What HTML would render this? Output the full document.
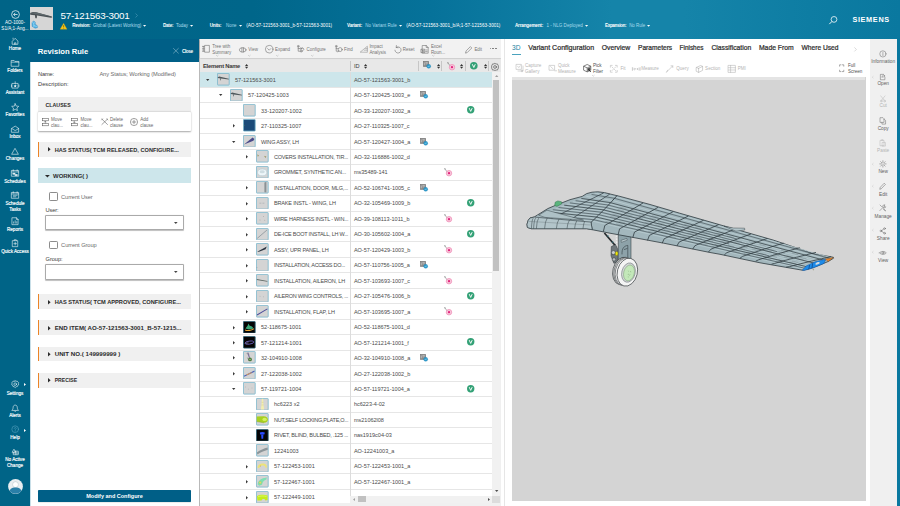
<!DOCTYPE html>
<html><head><meta charset="utf-8"><title>57-121563-3001</title>
<style>
html,body{margin:0;padding:0;}
body{width:900px;height:506px;overflow:hidden;position:relative;background:#006487;font-family:"Liberation Sans",sans-serif;}
.b{position:absolute;display:block;}
.t{position:absolute;white-space:nowrap;}
svg{overflow:visible;}
</style></head><body>
<div class="b" style="left:0;top:0;width:900px;height:506px;background:linear-gradient(90deg,#006487 0%,#00668a 28%,#06729a 48%,#1584a9 68%,#1584a9 76%,#0e7da3 90%,#0a789f 100%);"></div>
<div class="b" style="left:0.00px;top:39.40px;width:30.00px;height:467.00px;background:#006487;"></div>
<svg class="b" style="left:10.50px;top:10.00px;" width="9.00" height="9.00" viewBox="0 0 9 9"><circle cx="4.5" cy="4.5" r="3.9" fill="none" stroke="#fff" stroke-width="0.7"/><path d="M6.6 4.5H2.6M4.3 2.8L2.6 4.5L4.3 6.2" fill="none" stroke="#fff" stroke-width="0.7"/></svg>
<div class="t" style="left:-35.00px;width:100px;text-align:center;top:20px;font-size:4.60px;line-height:5px;color:#fff;">AO-1000-</div>
<div class="t" style="left:-35.00px;width:100px;text-align:center;top:26px;font-size:4.60px;line-height:5px;color:#fff;">S1/A;1-Ang...</div>
<div class="b" style="left:30.00px;top:7.30px;width:22.50px;height:22.50px;background:#d6d6d6;"></div>
<svg class="b" style="left:30.00px;top:7.30px;" width="22.50" height="22.50" viewBox="0 0 22.5 22.5"><path d="M0.2 6.0L3 5.0L5.2 4.9L22 9.6L22.2 10.6L20.8 10.8L7.2 8.4L4.8 8.3L0.2 7.7Z" fill="#4a5256"/><path d="M0.2 6.0L5.2 4.9L21 9.4L6 7.2Z" fill="#5f686c"/><path d="M5.0 8.0L6.9 8.3L6.8 10.6L6.2 11.4L5.4 11.0Z" fill="#3c4246"/><path d="M2.0 15.4L3.6 14.2L5.2 15L5.2 17.4L6.8 18.2L7.6 19.4L7.4 20.6L5.2 21.2L2.2 19.4Z" fill="#4fb2e4" stroke="#2a86c4" stroke-width="0.5" stroke-linejoin="round"/><path d="M2 15.4L3.8 16.4V20.2M3.8 16.4L5.2 15.2M3.8 18.4L5.4 19.2L7.4 19.4" fill="none" stroke="#bfe6f8" stroke-width="0.5"/></svg>
<div class="t" style="left:60.40px;top:10px;font-size:9.90px;line-height:11px;color:#fff;letter-spacing:-0.236px;">57-121563-3001</div>
<svg class="b" style="left:135.30px;top:13.30px;" width="3.00" height="5.00" viewBox="0 0 3 5"><path d="M0.5 0.5L2.5 2.5L0.5 4.5" fill="none" stroke="#4d9ab8" stroke-width="0.6"/></svg>
<svg class="b" style="left:60.00px;top:22.70px;" width="7.20" height="6.60" viewBox="0 0 7.2 6.6"><path d="M3.6 0.3L7 6.2H0.2Z" fill="#f5c518" stroke="#e0a800" stroke-width="0.3"/><path d="M3.6 2.2V4.3M3.6 4.9V5.5" stroke="#5a4a00" stroke-width="0.6"/></svg>
<div class="t" style="left:72.20px;top:23px;font-size:4.60px;line-height:5px;color:#fff;font-weight:700;letter-spacing:-0.288px;">Revision:</div>
<div class="t" style="left:92.90px;top:23px;font-size:4.64px;line-height:5px;color:#a9dcec;">Global (Latest Working)</div>
<svg class="b" style="left:143.30px;top:25.20px;" width="3.20" height="1.80" viewBox="0 0 3.2 1.8"><path d="M0 0H3.2L1.6 1.8Z" fill="#fff"/></svg>
<div class="t" style="left:162.90px;top:23px;font-size:4.60px;line-height:5px;color:#fff;font-weight:700;letter-spacing:-0.201px;">Date:</div>
<div class="t" style="left:175.90px;top:23px;font-size:4.53px;line-height:5px;color:#a9dcec;">Today</div>
<svg class="b" style="left:189.90px;top:25.20px;" width="3.20" height="1.80" viewBox="0 0 3.2 1.8"><path d="M0 0H3.2L1.6 1.8Z" fill="#fff"/></svg>
<div class="t" style="left:209.80px;top:23px;font-size:4.60px;line-height:5px;color:#fff;font-weight:700;letter-spacing:-0.266px;">Units:</div>
<div class="t" style="left:226.00px;top:23px;font-size:4.43px;line-height:5px;color:#a9dcec;">None</div>
<svg class="b" style="left:239.00px;top:25.20px;" width="3.20" height="1.80" viewBox="0 0 3.2 1.8"><path d="M0 0H3.2L1.6 1.8Z" fill="#fff"/></svg>
<div class="t" style="left:246.20px;top:23px;font-size:4.63px;line-height:5px;color:#fff;">(AO-57-121563-3001_b-57-121563-3001)</div>
<div class="t" style="left:347.10px;top:23px;font-size:4.60px;line-height:5px;color:#fff;font-weight:700;letter-spacing:-0.253px;">Variant:</div>
<div class="t" style="left:365.20px;top:23px;font-size:4.54px;line-height:5px;color:#a9dcec;">No Variant Rule</div>
<svg class="b" style="left:399.40px;top:25.20px;" width="3.20" height="1.80" viewBox="0 0 3.2 1.8"><path d="M0 0H3.2L1.6 1.8Z" fill="#fff"/></svg>
<div class="t" style="left:406.30px;top:23px;font-size:4.64px;line-height:5px;color:#fff;">(AO-57-121563-3001_b/A;1-57-121563-3001)</div>
<div class="t" style="left:514.90px;top:23px;font-size:4.60px;line-height:5px;color:#fff;font-weight:700;letter-spacing:-0.160px;">Arrangement:</div>
<div class="t" style="left:546.50px;top:23px;font-size:4.54px;line-height:5px;color:#a9dcec;">1 - NLG Deployed</div>
<svg class="b" style="left:584.90px;top:25.20px;" width="3.20" height="1.80" viewBox="0 0 3.2 1.8"><path d="M0 0H3.2L1.6 1.8Z" fill="#fff"/></svg>
<div class="t" style="left:605.00px;top:23px;font-size:4.60px;line-height:5px;color:#fff;font-weight:700;letter-spacing:-0.366px;">Expansion:</div>
<div class="t" style="left:629.20px;top:23px;font-size:4.43px;line-height:5px;color:#a9dcec;">No Rule</div>
<svg class="b" style="left:646.70px;top:25.20px;" width="3.20" height="1.80" viewBox="0 0 3.2 1.8"><path d="M0 0H3.2L1.6 1.8Z" fill="#fff"/></svg>
<svg class="b" style="left:828.00px;top:15.00px;" width="10.00" height="10.00" viewBox="0 0 10 10"><circle cx="6" cy="4.4" r="2.9" fill="none" stroke="#fff" stroke-width="0.75"/><path d="M3.9 6.5L1.3 9.1" stroke="#fff" stroke-width="0.9"/></svg>
<div class="t" style="left:852.40px;top:15px;font-size:7.30px;line-height:9px;color:#fff;font-weight:700;letter-spacing:0.657px;">SIEMENS</div>
<svg class="b" style="left:10.80px;top:37.00px;" width="8.40" height="8.40" viewBox="0 0 9 9"><g fill="none" stroke="#fff" stroke-width="0.6" stroke-linejoin="round" stroke-linecap="round"><path d="M1.6 4.4L4.5 1.4L7.4 4.4V7.8H1.6Z"/><path d="M3.8 7.8V6.2H5.2V7.8"/><path d="M2.2 2.2V1.2"/></g></svg>
<div class="t" style="left:-35.00px;width:100px;text-align:center;top:46px;font-size:4.60px;line-height:5px;color:#fff;-webkit-text-stroke:0.16px #fff;">Home</div>
<svg class="b" style="left:10.80px;top:58.70px;" width="8.40" height="8.40" viewBox="0 0 9 9"><g fill="none" stroke="#fff" stroke-width="0.6" stroke-linejoin="round" stroke-linecap="round"><path d="M0.6 1.6H3.4L4.2 2.6H8.4V7.8H0.6Z"/><path d="M0.6 3.4H8.4"/></g></svg>
<div class="t" style="left:-35.00px;width:100px;text-align:center;top:68px;font-size:4.60px;line-height:5px;color:#fff;-webkit-text-stroke:0.16px #fff;">Folders</div>
<svg class="b" style="left:10.80px;top:80.70px;" width="8.40" height="8.40" viewBox="0 0 9 9"><g fill="none" stroke="#fff" stroke-width="0.6" stroke-linejoin="round" stroke-linecap="round"><path d="M1.4 2.6H7.6V7.6H1.4Z"/><path d="M4.5 2.6V0.8"/><path d="M4.5 3.6L5 4.7L6.2 4.8L5.3 5.6L5.6 6.8L4.5 6.2L3.4 6.8L3.7 5.6L2.8 4.8L4 4.7Z" fill="#fff" stroke="none"/><path d="M0.5 4.2V6M8.5 4.2V6"/></g></svg>
<div class="t" style="left:-35.00px;width:100px;text-align:center;top:90px;font-size:4.60px;line-height:5px;color:#fff;-webkit-text-stroke:0.16px #fff;">Assistant</div>
<svg class="b" style="left:10.80px;top:102.80px;" width="8.40" height="8.40" viewBox="0 0 9 9"><g fill="none" stroke="#fff" stroke-width="0.6" stroke-linejoin="round" stroke-linecap="round"><path d="M4.5 0.8L5.6 3.3L8.3 3.6L6.3 5.4L6.9 8.1L4.5 6.7L2.1 8.1L2.7 5.4L0.7 3.6L3.4 3.3Z"/></g></svg>
<div class="t" style="left:-35.00px;width:100px;text-align:center;top:112px;font-size:4.60px;line-height:5px;color:#fff;-webkit-text-stroke:0.16px #fff;">Favorites</div>
<svg class="b" style="left:10.80px;top:124.80px;" width="8.40" height="8.40" viewBox="0 0 9 9"><g fill="none" stroke="#fff" stroke-width="0.6" stroke-linejoin="round" stroke-linecap="round"><path d="M0.8 3.6L4.5 1.2L8.2 3.6V7.8H0.8Z"/><path d="M0.8 3.8L4.5 6L8.2 3.8"/></g></svg>
<div class="t" style="left:-35.00px;width:100px;text-align:center;top:134px;font-size:4.60px;line-height:5px;color:#fff;-webkit-text-stroke:0.16px #fff;">Inbox</div>
<svg class="b" style="left:10.80px;top:146.60px;" width="8.40" height="8.40" viewBox="0 0 9 9"><g fill="none" stroke="#fff" stroke-width="0.6" stroke-linejoin="round" stroke-linecap="round"><path d="M4.5 1.8L7.9 7.8H1.1Z"/></g></svg>
<div class="t" style="left:-35.00px;width:100px;text-align:center;top:156px;font-size:4.60px;line-height:5px;color:#fff;-webkit-text-stroke:0.16px #fff;">Changes</div>
<svg class="b" style="left:10.80px;top:168.60px;" width="8.40" height="8.40" viewBox="0 0 9 9"><g fill="none" stroke="#fff" stroke-width="0.6" stroke-linejoin="round" stroke-linecap="round"><path d="M0.8 1.6H8.2V7.8H0.8Z"/><path d="M0.8 3.2H8.2"/><path d="M2.4 0.8V2.2M6.6 0.8V2.2"/><path d="M2.2 4.6H4.4V5.6H2.2ZM4.6 6H6.8V7H4.6Z" fill="#fff"/></g></svg>
<div class="t" style="left:-35.00px;width:100px;text-align:center;top:179px;font-size:4.60px;line-height:5px;color:#fff;-webkit-text-stroke:0.16px #fff;">Schedules</div>
<svg class="b" style="left:10.80px;top:190.60px;" width="8.40" height="8.40" viewBox="0 0 9 9"><g fill="none" stroke="#fff" stroke-width="0.6" stroke-linejoin="round" stroke-linecap="round"><path d="M0.8 1.6H8.2V7.8H0.8Z"/><path d="M0.8 3.2H8.2"/><path d="M2.4 0.8V2.2M6.6 0.8V2.2"/><path d="M2.4 4.6H6.6M2.4 6.2H5.2"/></g></svg>
<svg class="b" style="left:10.80px;top:216.80px;" width="8.40" height="8.40" viewBox="0 0 9 9"><g fill="none" stroke="#fff" stroke-width="0.6" stroke-linejoin="round" stroke-linecap="round"><path d="M1.4 0.8H5.8L7.6 2.6V8.2H1.4Z"/><path d="M5.8 0.8V2.6H7.6"/><path d="M2.8 6.6V5.2M4.5 6.6V4M6.2 6.6V5"/></g></svg>
<div class="t" style="left:-35.00px;width:100px;text-align:center;top:227px;font-size:4.60px;line-height:5px;color:#fff;-webkit-text-stroke:0.16px #fff;">Reports</div>
<svg class="b" style="left:10.80px;top:238.60px;" width="8.40" height="8.40" viewBox="0 0 9 9"><g fill="none" stroke="#fff" stroke-width="0.6" stroke-linejoin="round" stroke-linecap="round"><path d="M1.8 1.8H7.2V8.2H1.8Z"/><path d="M3.4 1.8V0.8H5.6V1.8"/><path d="M4.5 3.6V6.4M3.1 5H5.9"/></g></svg>
<div class="t" style="left:-35.00px;width:100px;text-align:center;top:249px;font-size:4.60px;line-height:5px;color:#fff;-webkit-text-stroke:0.16px #fff;">Quick Access</div>
<svg class="b" style="left:10.80px;top:380.40px;" width="8.40" height="8.40" viewBox="0 0 9 9"><g fill="none" stroke="#fff" stroke-width="0.6" stroke-linejoin="round" stroke-linecap="round"><circle cx="4.5" cy="4.5" r="1.4"/><path d="M4.5 0.8L5.4 1.4L6.6 1.2L7.2 2.2L8.2 2.8L7.9 4L8.2 5.2L7.2 5.8L6.8 7L5.6 7.2L4.5 8.2L3.4 7.2L2.2 7L1.8 5.8L0.8 5.2L1.1 4L0.8 2.8L1.8 2.2L2.4 1.2L3.6 1.4Z"/></g></svg>
<div class="t" style="left:-35.00px;width:100px;text-align:center;top:391px;font-size:4.60px;line-height:5px;color:#fff;-webkit-text-stroke:0.16px #fff;">Settings</div>
<svg class="b" style="left:10.80px;top:403.60px;" width="8.40" height="8.40" viewBox="0 0 9 9"><g fill="none" stroke="#fff" stroke-width="0.6" stroke-linejoin="round" stroke-linecap="round"><path d="M1.2 6.6C2.2 5.6 2.2 4.6 2.3 3.4C2.4 2 3.3 1.2 4.5 1.2C5.7 1.2 6.6 2 6.7 3.4C6.8 4.6 6.8 5.6 7.8 6.6Z"/><path d="M3.7 7.6C4 8.2 5 8.2 5.3 7.6"/></g></svg>
<div class="t" style="left:-35.00px;width:100px;text-align:center;top:413px;font-size:4.60px;line-height:5px;color:#fff;-webkit-text-stroke:0.16px #fff;">Alerts</div>
<svg class="b" style="left:10.80px;top:425.40px;" width="8.40" height="8.40" viewBox="0 0 9 9"><g fill="none" stroke="#fff" stroke-width="0.6" stroke-linejoin="round" stroke-linecap="round"><circle cx="4.5" cy="4.5" r="3.6" stroke="#5aa6c2"/><path d="M3.4 3.6C3.4 2.4 5.6 2.4 5.6 3.6C5.6 4.4 4.5 4.4 4.5 5.4M4.5 6.4V6.6" stroke="#5aa6c2"/></g></svg>
<div class="t" style="left:-35.00px;width:100px;text-align:center;top:435px;font-size:4.60px;line-height:5px;color:#fff;-webkit-text-stroke:0.16px #fff;">Help</div>
<svg class="b" style="left:10.80px;top:447.60px;" width="8.40" height="8.40" viewBox="0 0 9 9"><g fill="none" stroke="#fff" stroke-width="0.6" stroke-linejoin="round" stroke-linecap="round"><path d="M3.4 1.6L5.2 4.6H1.6Z"/><path d="M3.6 3.4H7.8V7.2H2.4V4.8"/><path d="M5.2 3.4V7.2M2.4 5.4H7.8"/></g></svg>
<div class="t" style="left:-35.00px;width:100px;text-align:center;top:201px;font-size:4.60px;line-height:5px;color:#fff;-webkit-text-stroke:0.16px #fff;">Schedule</div>
<div class="t" style="left:-35.00px;width:100px;text-align:center;top:207px;font-size:4.60px;line-height:5px;color:#fff;-webkit-text-stroke:0.16px #fff;">Tasks</div>
<div class="t" style="left:-35.00px;width:100px;text-align:center;top:457px;font-size:4.60px;line-height:5px;color:#fff;-webkit-text-stroke:0.16px #fff;">No Active</div>
<div class="t" style="left:-35.00px;width:100px;text-align:center;top:463px;font-size:4.60px;line-height:5px;color:#fff;-webkit-text-stroke:0.16px #fff;">Change</div>
<svg class="b" style="left:24.20px;top:383.30px;" width="2.20" height="3.00" viewBox="0 0 2.2 3"><path d="M0 0L2 1.5L0 3Z" fill="#fff"/></svg>
<svg class="b" style="left:24.20px;top:428.50px;" width="2.20" height="3.00" viewBox="0 0 2.2 3"><path d="M0 0L2 1.5L0 3Z" fill="#fff"/></svg>
<svg class="b" style="left:7.50px;top:479.20px;" width="15.00" height="15.00" viewBox="0 0 15 15"><defs><clipPath id="av"><circle cx="7.5" cy="7.5" r="7.3"/></clipPath></defs><circle cx="7.5" cy="7.5" r="7.4" fill="#e9eef1"/><g clip-path="url(#av)"><circle cx="7.5" cy="5.6" r="2.9" fill="#fff" stroke="#9fb3bd" stroke-width="0.4"/><path d="M1.2 15C1.2 10 3.6 8.6 7.5 8.6C11.4 8.6 13.8 10 13.8 15Z" fill="#2a7fa8"/></g></svg>
<div class="b" style="left:30.00px;top:39.40px;width:168.60px;height:466.60px;background:#fff;"></div>
<div class="b" style="left:30.00px;top:39.40px;width:168.60px;height:22.20px;background:#005f87;"></div>
<div class="b" style="left:30.00px;top:61.60px;width:0.80px;height:445.00px;background:#c9dfe8;"></div>
<div class="t" style="left:37.80px;top:47px;font-size:7.64px;line-height:9px;color:#fff;font-weight:700;">Revision Rule</div>
<svg class="b" style="left:173.30px;top:48.20px;" width="5.80" height="5.60" viewBox="0 0 5.8 5.6"><path d="M0.2 0.2L5.6 5.4M5.6 0.2L0.2 5.4" stroke="#9cc6d6" stroke-width="0.55" fill="none"/></svg>
<div class="t" style="left:182.00px;top:49px;font-size:4.70px;line-height:5px;color:#fff;font-weight:700;letter-spacing:-0.425px;">Close</div>
<div class="t" style="left:38.00px;top:71px;font-size:5.70px;line-height:6px;color:#3a3a3a;letter-spacing:-0.147px;">Name:</div>
<div class="t" style="left:99.40px;top:71px;font-size:5.70px;line-height:6px;color:#6b6b6b;letter-spacing:-0.061px;">Any Status; Working (Modified)</div>
<div class="t" style="left:38.00px;top:81px;font-size:5.70px;line-height:6px;color:#3a3a3a;letter-spacing:0.046px;">Description:</div>
<div class="b" style="left:38.00px;top:97.10px;width:152.90px;height:14.80px;background:#f0f0f0;"></div>
<div class="t" style="left:45.50px;top:102px;font-size:5.29px;line-height:6px;color:#2b2b2b;font-weight:700;">CLAUSES</div>
<div class="b" style="left:38.00px;top:111.90px;width:152.90px;height:19.30px;background:#fff;box-shadow:0 0.6px 1.8px rgba(0,0,0,0.35);border-radius:0.8px;"></div>
<svg class="b" style="left:42.20px;top:117.70px;" width="6.60" height="8.20" viewBox="0 0 6.6 8.2"><g fill="none" stroke="#555" stroke-width="0.55"><rect x="0.3" y="0.4" width="6" height="2.4"/><rect x="0.3" y="5.4" width="6" height="2.4"/><path d="M3.3 5.4V3.2M2.3 4.2L3.3 3.1L4.3 4.2"/></g></svg>
<div class="t" style="left:51.10px;top:117px;font-size:4.50px;line-height:5px;color:#666;">Move</div>
<div class="t" style="left:51.10px;top:123px;font-size:4.50px;line-height:5px;color:#666;">clau...</div>
<svg class="b" style="left:71.10px;top:117.70px;" width="6.60" height="8.20" viewBox="0 0 6.6 8.2"><g fill="none" stroke="#555" stroke-width="0.55"><rect x="0.3" y="0.4" width="6" height="2.4"/><rect x="0.3" y="5.4" width="6" height="2.4"/><path d="M3.3 2.8V5M2.3 4.1L3.3 5.1L4.3 4.1"/></g></svg>
<div class="t" style="left:80.60px;top:117px;font-size:4.50px;line-height:5px;color:#666;">Move</div>
<div class="t" style="left:80.60px;top:123px;font-size:4.50px;line-height:5px;color:#666;">clau...</div>
<svg class="b" style="left:101.00px;top:118.00px;" width="7.40" height="7.60" viewBox="0 0 7.4 7.6"><g fill="none" stroke="#555" stroke-width="0.55"><path d="M0.6 0.8L6.8 6.8M6.8 0.8L0.6 6.8"/><path d="M0.4 2.2L1.8 0.6M5.6 0.6L7 2.2"/></g></svg>
<div class="t" style="left:110.00px;top:117px;font-size:4.50px;line-height:5px;color:#666;">Delete</div>
<div class="t" style="left:110.00px;top:123px;font-size:4.50px;line-height:5px;color:#666;">clause</div>
<svg class="b" style="left:130.20px;top:117.80px;" width="8.00" height="8.00" viewBox="0 0 8 8"><g fill="none" stroke="#555" stroke-width="0.55"><circle cx="4" cy="4" r="3.6"/><path d="M4 1.8V6.2M1.8 4H6.2"/></g></svg>
<div class="t" style="left:140.20px;top:117px;font-size:4.50px;line-height:5px;color:#666;">Add</div>
<div class="t" style="left:140.20px;top:123px;font-size:4.50px;line-height:5px;color:#666;">clause</div>
<div class="b" style="left:38.00px;top:142.00px;width:152.90px;height:14.90px;background:#f0f0f0;"></div>
<div class="b" style="left:38.00px;top:142.00px;width:1.40px;height:14.90px;background:#ec8426;"></div>
<svg class="b" style="left:47.60px;top:147.30px;" width="2.60" height="4.60" viewBox="0 0 2.6 4.6"><path d="M0 0L2.6 2.3L0 4.6Z" fill="#2b2b2b"/></svg>
<div class="t" style="left:54.70px;top:147px;font-size:5.61px;line-height:6px;color:#2b2b2b;font-weight:700;">HAS STATUS( TCM RELEASED, CONFIGURE...</div>
<div class="b" style="left:38.00px;top:168.20px;width:152.90px;height:14.90px;background:#cde6eb;"></div>
<svg class="b" style="left:45.00px;top:174.70px;" width="4.80" height="2.60" viewBox="0 0 4.8 2.6"><path d="M0 0H4.8L2.4 2.6Z" fill="#2b2b2b"/></svg>
<div class="t" style="left:53.10px;top:173px;font-size:5.93px;line-height:6px;color:#2b2b2b;font-weight:700;">WORKING( )</div>
<div class="b" style="left:38.00px;top:294.30px;width:152.90px;height:14.90px;background:#f0f0f0;"></div>
<div class="b" style="left:38.00px;top:294.30px;width:1.40px;height:14.90px;background:#ec8426;"></div>
<svg class="b" style="left:47.60px;top:299.60px;" width="2.60" height="4.60" viewBox="0 0 2.6 4.6"><path d="M0 0L2.6 2.3L0 4.6Z" fill="#2b2b2b"/></svg>
<div class="t" style="left:54.70px;top:299px;font-size:5.68px;line-height:6px;color:#2b2b2b;font-weight:700;">HAS STATUS( TCM APPROVED, CONFIGURE...</div>
<div class="b" style="left:38.00px;top:320.40px;width:152.90px;height:14.90px;background:#f0f0f0;"></div>
<div class="b" style="left:38.00px;top:320.40px;width:1.40px;height:14.90px;background:#ec8426;"></div>
<svg class="b" style="left:47.60px;top:325.70px;" width="2.60" height="4.60" viewBox="0 0 2.6 4.6"><path d="M0 0L2.6 2.3L0 4.6Z" fill="#2b2b2b"/></svg>
<div class="t" style="left:54.70px;top:324px;font-size:6.15px;line-height:7px;color:#2b2b2b;font-weight:700;">END ITEM( AO-57-121563-3001_B-57-1215...</div>
<div class="b" style="left:38.00px;top:346.60px;width:152.90px;height:14.90px;background:#f0f0f0;"></div>
<div class="b" style="left:38.00px;top:346.60px;width:1.40px;height:14.90px;background:#ec8426;"></div>
<svg class="b" style="left:47.60px;top:351.90px;" width="2.60" height="4.60" viewBox="0 0 2.6 4.6"><path d="M0 0L2.6 2.3L0 4.6Z" fill="#2b2b2b"/></svg>
<div class="t" style="left:54.70px;top:350px;font-size:6.18px;line-height:7px;color:#2b2b2b;font-weight:700;">UNIT NO.( 149999999 )</div>
<div class="b" style="left:38.00px;top:372.70px;width:152.90px;height:14.90px;background:#f0f0f0;"></div>
<div class="b" style="left:38.00px;top:372.70px;width:1.40px;height:14.90px;background:#ec8426;"></div>
<svg class="b" style="left:47.60px;top:378.00px;" width="2.60" height="4.60" viewBox="0 0 2.6 4.6"><path d="M0 0L2.6 2.3L0 4.6Z" fill="#2b2b2b"/></svg>
<div class="t" style="left:54.70px;top:377px;font-size:5.13px;line-height:6px;color:#2b2b2b;font-weight:700;">PRECISE</div>
<div class="b" style="left:49.20px;top:192.20px;width:8.50px;height:8.50px;background:#fff;border:0.7px solid #8c8c8c;box-sizing:border-box;border-radius:1.2px;"></div>
<div class="t" style="left:61.10px;top:194px;font-size:5.70px;line-height:6px;color:#6b6b6b;letter-spacing:-0.084px;">Current User</div>
<div class="t" style="left:45.60px;top:207px;font-size:5.70px;line-height:6px;color:#3a3a3a;letter-spacing:-0.155px;">User:</div>
<div class="b" style="left:45.30px;top:215.20px;width:138.50px;height:15.20px;background:#fff;border:0.6px solid #aaaaaa;box-sizing:border-box;border-radius:1px;box-shadow:0 0.5px 0.8px rgba(0,0,0,0.25);"></div>
<svg class="b" style="left:173.80px;top:222.10px;" width="3.60" height="2.00" viewBox="0 0 3.6 2"><path d="M0 0H3.6L1.8 2Z" fill="#444"/></svg>
<div class="b" style="left:49.20px;top:240.80px;width:8.50px;height:8.50px;background:#fff;border:0.7px solid #8c8c8c;box-sizing:border-box;border-radius:1.2px;"></div>
<div class="t" style="left:61.10px;top:242px;font-size:5.70px;line-height:6px;color:#6b6b6b;letter-spacing:-0.061px;">Current Group</div>
<div class="t" style="left:45.60px;top:256px;font-size:5.70px;line-height:6px;color:#3a3a3a;letter-spacing:-0.085px;">Group:</div>
<div class="b" style="left:45.30px;top:264.40px;width:138.50px;height:15.20px;background:#fff;border:0.6px solid #aaaaaa;box-sizing:border-box;border-radius:1px;box-shadow:0 0.5px 0.8px rgba(0,0,0,0.25);"></div>
<svg class="b" style="left:173.80px;top:271.30px;" width="3.60" height="2.00" viewBox="0 0 3.6 2"><path d="M0 0H3.6L1.8 2Z" fill="#444"/></svg>
<div class="b" style="left:38.30px;top:490.00px;width:152.50px;height:12.40px;background:#005f87;border-radius:0.9px;box-shadow:0 0.3px 0.6px rgba(0,0,0,0.3);"></div>
<div class="t" style="left:64.50px;width:100px;text-align:center;top:493px;font-size:5.50px;line-height:6px;color:#fff;font-weight:700;">Modify and Configure</div>
<div class="b" style="left:198.60px;top:39.40px;width:1.00px;height:467.00px;background:#b9b9b9;"></div>
<div class="b" style="left:199.60px;top:39.40px;width:301.30px;height:466.60px;background:#f0f0f0;"></div>
<div class="b" style="left:199.60px;top:57.80px;width:301.30px;height:13.80px;background:#e8e8e8;"></div>
<div class="b" style="left:199.60px;top:39.40px;width:301.30px;height:18.40px;background:#f2f2f2;box-shadow:0 0.7px 1.4px rgba(0,0,0,0.34);"></div>
<svg class="b" style="left:202.40px;top:45.40px;" width="7.80" height="7.60" viewBox="0 0 7.8 7.6"><g fill="none" stroke="#666666" stroke-width="0.55" stroke-linejoin="round" stroke-linecap="round"><rect x="3" y="0.4" width="4.4" height="6.8"/><path d="M0.4 1.4H2.2M0.4 3.8H2.2M0.4 6.2H2.2M1.3 1.4V6.2"/></g></svg>
<div class="t" style="left:212.20px;top:44px;font-size:4.45px;line-height:5px;color:#727272;">Tree with</div>
<div class="t" style="left:212.20px;top:50px;font-size:4.45px;line-height:5px;color:#727272;">Summary</div>
<svg class="b" style="left:215.90px;top:55.20px;" width="2.60" height="1.40" viewBox="0 0 2.6 1.4"><path d="M0.1 0.1L1.3 1.2L2.5 0.1" fill="none" stroke="#9a9a9a" stroke-width="0.4"/></svg>
<svg class="b" style="left:238.80px;top:46.60px;" width="7.40" height="5.80" viewBox="0 0 7.4 5.8"><g fill="none" stroke="#666666" stroke-width="0.55" stroke-linejoin="round" stroke-linecap="round"><ellipse cx="3.7" cy="2.9" rx="3.4" ry="2.2"/><path d="M2.9 0.8V5M4.5 0.8V5"/></g></svg>
<div class="t" style="left:248.30px;top:47px;font-size:4.45px;line-height:5px;color:#727272;">View</div>
<svg class="b" style="left:248.00px;top:55.20px;" width="2.60" height="1.40" viewBox="0 0 2.6 1.4"><path d="M0.1 0.1L1.3 1.2L2.5 0.1" fill="none" stroke="#9a9a9a" stroke-width="0.4"/></svg>
<svg class="b" style="left:264.60px;top:45.30px;" width="8.40" height="8.40" viewBox="0 0 8.4 8.4"><g fill="none" stroke="#666666" stroke-width="0.55" stroke-linejoin="round" stroke-linecap="round"><circle cx="4.2" cy="4.2" r="3.8"/><path d="M2.6 3.6L4.2 5.2L5.8 3.6"/></g></svg>
<div class="t" style="left:275.00px;top:47px;font-size:4.45px;line-height:5px;color:#727272;">Expand</div>
<svg class="b" style="left:275.80px;top:55.20px;" width="2.60" height="1.40" viewBox="0 0 2.6 1.4"><path d="M0.1 0.1L1.3 1.2L2.5 0.1" fill="none" stroke="#9a9a9a" stroke-width="0.4"/></svg>
<svg class="b" style="left:297.00px;top:45.40px;" width="7.60" height="8.20" viewBox="0 0 7.6 8.2"><g fill="none" stroke="#666666" stroke-width="0.55" stroke-linejoin="round" stroke-linecap="round"><circle cx="1.2" cy="1.2" r="0.8"/><path d="M1.2 2V6.2H3.2M1.2 3.6H3"/><circle cx="4" cy="3.6" r="0.9"/><circle cx="4.2" cy="6.2" r="0.9"/><path d="M5.6 2.6L7 4.2L5.6 5.8"/></g></svg>
<div class="t" style="left:306.60px;top:47px;font-size:4.45px;line-height:5px;color:#727272;">Configure</div>
<svg class="b" style="left:310.50px;top:55.20px;" width="2.60" height="1.40" viewBox="0 0 2.6 1.4"><path d="M0.1 0.1L1.3 1.2L2.5 0.1" fill="none" stroke="#9a9a9a" stroke-width="0.4"/></svg>
<svg class="b" style="left:334.50px;top:45.40px;" width="7.60" height="8.20" viewBox="0 0 7.6 8.2"><g fill="none" stroke="#666666" stroke-width="0.55" stroke-linejoin="round" stroke-linecap="round"><circle cx="1.2" cy="1.2" r="0.8"/><path d="M1.2 2V6.2H3M1.2 3.6H3"/><circle cx="5.2" cy="4.6" r="2"/><path d="M3.8 6L2.9 7"/></g></svg>
<div class="t" style="left:344.00px;top:47px;font-size:4.45px;line-height:5px;color:#727272;">Find</div>
<svg class="b" style="left:360.00px;top:45.40px;" width="8.20" height="7.60" viewBox="0 0 8.2 7.6"><g fill="none" stroke="#8e8e8e" stroke-width="0.55" stroke-linejoin="round" stroke-linecap="round"><path d="M0.5 6.9L7.4 1.2V6.9Z"/><path d="M5.6 3.6H7.2M5.6 5.2H7.2M4.2 5.2H4.8"/></g></svg>
<div class="t" style="left:369.40px;top:44px;font-size:4.45px;line-height:5px;color:#727272;">Impact</div>
<div class="t" style="left:369.40px;top:50px;font-size:4.45px;line-height:5px;color:#727272;">Analysis</div>
<svg class="b" style="left:393.80px;top:45.40px;" width="7.40" height="8.00" viewBox="0 0 7.4 8"><g fill="none" stroke="#666666" stroke-width="0.55" stroke-linejoin="round" stroke-linecap="round"><path d="M2.2 2.4A3.1 3.1 0 1 1 0.9 5.2"/><path d="M2.4 0.5L2.1 2.5L4.1 2.7"/></g></svg>
<div class="t" style="left:402.80px;top:47px;font-size:4.45px;line-height:5px;color:#727272;">Reset</div>
<svg class="b" style="left:421.00px;top:45.00px;" width="7.80" height="8.80" viewBox="0 0 7.8 8.8"><g fill="none" stroke="#666666" stroke-width="0.55" stroke-linejoin="round" stroke-linecap="round"><path d="M1.6 0.5H5.2L7.2 2.5V8.2H1.6Z"/><path d="M5.2 0.5V2.5H7.2"/><path d="M0.3 4.2H3.6V7.6H0.3ZM1 5L2.9 6.8M2.9 5L1 6.8"/><path d="M4.6 5H6.2M4.6 6.6H6.2"/></g></svg>
<div class="t" style="left:430.90px;top:44px;font-size:4.45px;line-height:5px;color:#727272;">Excel</div>
<div class="t" style="left:430.90px;top:50px;font-size:4.45px;line-height:5px;color:#727272;">Roun...</div>
<svg class="b" style="left:431.70px;top:55.20px;" width="2.60" height="1.40" viewBox="0 0 2.6 1.4"><path d="M0.1 0.1L1.3 1.2L2.5 0.1" fill="none" stroke="#9a9a9a" stroke-width="0.4"/></svg>
<svg class="b" style="left:465.40px;top:45.60px;" width="7.40" height="7.40" viewBox="0 0 7.4 7.4"><g fill="none" stroke="#666666" stroke-width="0.55" stroke-linejoin="round" stroke-linecap="round"><path d="M0.6 6.8L1.1 4.9L5.4 0.6L6.8 2L2.5 6.3Z"/></g></svg>
<div class="t" style="left:474.40px;top:47px;font-size:4.45px;line-height:5px;color:#727272;">Edit</div>
<div class="b" style="left:489.60px;top:48.00px;width:1.70px;height:0.90px;background:#6a6a6a;border-radius:0.4px;"></div>
<div class="b" style="left:492.30px;top:48.00px;width:1.70px;height:0.90px;background:#6a6a6a;border-radius:0.4px;"></div>
<div class="b" style="left:495.00px;top:48.00px;width:1.70px;height:0.90px;background:#6a6a6a;border-radius:0.4px;"></div>
<div class="t" style="left:203.00px;top:63px;font-size:5.80px;line-height:6px;color:#3a3a3a;font-weight:700;letter-spacing:-0.243px;">Element Name</div>
<svg class="b" style="left:245.00px;top:63.85px;" width="3.20" height="4.70" viewBox="0 0 3.2 4.7"><path d="M1.6 0L3.2 2H0Z" fill="#333"/><path d="M0 2.7H3.2L1.6 4.7Z" fill="#333"/></svg>
<div class="t" style="left:353.90px;top:63px;font-size:5.60px;line-height:6px;color:#3a3a3a;">ID</div>
<svg class="b" style="left:364.30px;top:63.85px;" width="3.20" height="4.70" viewBox="0 0 3.2 4.7"><path d="M1.6 0L3.2 2H0Z" fill="#333"/><path d="M0 2.7H3.2L1.6 4.7Z" fill="#333"/></svg>
<div class="b" style="left:350.05px;top:60.60px;width:0.60px;height:10.40px;background:#c6c6c6;"></div>
<div class="b" style="left:418.45px;top:60.60px;width:0.60px;height:10.40px;background:#c6c6c6;"></div>
<div class="b" style="left:441.25px;top:60.60px;width:0.60px;height:10.40px;background:#c6c6c6;"></div>
<div class="b" style="left:465.35px;top:60.60px;width:0.60px;height:10.40px;background:#c6c6c6;"></div>
<div class="b" style="left:488.35px;top:60.60px;width:0.60px;height:10.40px;background:#c6c6c6;"></div>
<svg class="b" style="left:422.90px;top:61.30px;" width="8.00" height="7.40" viewBox="0 0 8 7.4"><rect x="0.3" y="0.3" width="5.4" height="5.2" fill="#8a8a8a" stroke="#6a6a6a" stroke-width="0.5"/><path d="M1.3 1.5V4.3M2.4 1.6H4.8M2.4 2.9H4.8" stroke="#e4e4e4" stroke-width="0.5"/><circle cx="5.7" cy="5.3" r="2" fill="#2f9ed0" stroke="#1878a8" stroke-width="0.35"/><path d="M4.9 5.4L5.5 6L6.6 4.7" stroke="#dff" stroke-width="0.4" fill="none"/></svg>
<svg class="b" style="left:436.90px;top:63.85px;" width="3.20" height="4.70" viewBox="0 0 3.2 4.7"><path d="M1.6 0L3.2 2H0Z" fill="#333"/><path d="M0 2.7H3.2L1.6 4.7Z" fill="#333"/></svg>
<svg class="b" style="left:446.60px;top:61.60px;" width="8.40" height="8.40" viewBox="0 0 8.4 8.4"><circle cx="5" cy="5.2" r="2.75" fill="#f8c4da" stroke="#ee8db5" stroke-width="0.7"/><circle cx="5" cy="5.2" r="1.1" fill="#e0207a"/><path d="M0.7 1.0L1.6 1.6L2.7 3.5" stroke="#666" stroke-width="0.5" fill="none"/><path d="M0.3 0.8H1.5M0.9 0.2V1.4" stroke="#666" stroke-width="0.4"/></svg>
<svg class="b" style="left:460.40px;top:63.85px;" width="3.20" height="4.70" viewBox="0 0 3.2 4.7"><path d="M1.6 0L3.2 2H0Z" fill="#333"/><path d="M0 2.7H3.2L1.6 4.7Z" fill="#333"/></svg>
<svg class="b" style="left:469.70px;top:61.80px;" width="7.60" height="7.60" viewBox="0 0 7.6 7.6"><circle cx="3.8" cy="3.8" r="3.8" fill="#33a176"/><path d="M2.3 2.1999999999999997L3.8 5.5L5.3 2.1999999999999997" stroke="#fff" stroke-width="0.9" fill="none" stroke-linejoin="round"/></svg>
<svg class="b" style="left:483.70px;top:63.85px;" width="3.20" height="4.70" viewBox="0 0 3.2 4.7"><path d="M1.6 0L3.2 2H0Z" fill="#333"/><path d="M0 2.7H3.2L1.6 4.7Z" fill="#333"/></svg>
<svg class="b" style="left:491.20px;top:62.50px;" width="8.00" height="8.00" viewBox="0 0 8 8"><g fill="none" stroke="#4a4a4a" stroke-width="0.62" stroke-linejoin="round" stroke-linecap="round"><circle cx="4" cy="4" r="1.4"/><path d="M4 0.5L5.2 1L6.4 0.9L6.9 2.1L7.6 3L7.1 4L7.6 5L6.9 5.9L6.4 7.1L5.2 7L4 7.5L2.8 7L1.6 7.1L1.1 5.9L0.4 5L0.9 4L0.4 3L1.1 2.1L1.6 0.9L2.8 1Z"/></g></svg>
<div class="b" style="left:199.60px;top:71.60px;width:292.70px;height:15.47px;background:#cde6eb;"></div>
<svg class="b" style="left:205.90px;top:78.93px;" width="3.40" height="2.00" viewBox="0 0 3.4 2"><path d="M0 0H3.4L1.7 2Z" fill="#3a3a3a"/></svg>
<svg class="b" style="left:217.10px;top:73.08px;overflow:hidden;" width="12.6" height="12.50" viewBox="0 0 12.6 12.50"><rect x="0.4" y="0.4" width="11.8" height="11.7" rx="0.6" fill="#d4d4d4" stroke="#7cb7cc" stroke-width="0.85"/><path d="M0.8 4.2L2.2 3.6L11.8 5.8V6.6L3.8 5.4L0.8 5Z" fill="#50595d"/><path d="M3 5.2L3.9 5.4L3.8 7.2L3.3 7.4Z" fill="#50595d"/></svg>
<div class="t" style="left:235.00px;top:77px;font-size:5.56px;line-height:6px;color:#4a4a4a;">57-121563-3001</div>
<div class="t" style="left:353.90px;top:77px;font-size:5.53px;line-height:6px;color:#4a4a4a;">AO-57-121563-3001_b</div>
<div class="b" style="left:199.60px;top:87.07px;width:292.70px;height:15.47px;background:#fff;"></div>
<div class="b" style="left:199.60px;top:86.82px;width:292.70px;height:0.60px;background:#e6e6e6;"></div>
<svg class="b" style="left:218.90px;top:94.40px;" width="3.40" height="2.00" viewBox="0 0 3.4 2"><path d="M0 0H3.4L1.7 2Z" fill="#3a3a3a"/></svg>
<svg class="b" style="left:230.10px;top:88.55px;overflow:hidden;" width="12.6" height="12.50" viewBox="0 0 12.6 12.50"><rect x="0.4" y="0.4" width="11.8" height="11.7" rx="0.6" fill="#d4d4d4" stroke="#7cb7cc" stroke-width="0.85"/><path d="M0.8 4.2L2.2 3.6L11.8 5.8V6.6L3.8 5.4L0.8 5Z" fill="#50595d"/><path d="M3 5.2L3.9 5.4L3.8 7.2L3.3 7.4Z" fill="#50595d"/></svg>
<div class="t" style="left:248.00px;top:92px;font-size:5.56px;line-height:6px;color:#4a4a4a;">57-120425-1003</div>
<div class="t" style="left:353.90px;top:92px;font-size:5.53px;line-height:6px;color:#4a4a4a;">AO-57-120425-1003_e</div>
<svg class="b" style="left:420.10px;top:91.10px;" width="8.00" height="7.40" viewBox="0 0 8 7.4"><rect x="0.3" y="0.3" width="5.4" height="5.2" fill="#8a8a8a" stroke="#6a6a6a" stroke-width="0.5"/><path d="M1.3 1.5V4.3M2.4 1.6H4.8M2.4 2.9H4.8" stroke="#e4e4e4" stroke-width="0.5"/><circle cx="5.7" cy="5.3" r="2" fill="#2f9ed0" stroke="#1878a8" stroke-width="0.35"/><path d="M4.9 5.4L5.5 6L6.6 4.7" stroke="#dff" stroke-width="0.4" fill="none"/></svg>
<div class="b" style="left:199.60px;top:102.53px;width:292.70px;height:15.47px;background:#fff;"></div>
<div class="b" style="left:199.60px;top:102.28px;width:292.70px;height:0.60px;background:#e6e6e6;"></div>
<svg class="b" style="left:243.10px;top:104.02px;overflow:hidden;" width="12.6" height="12.50" viewBox="0 0 12.6 12.50"><rect x="0.4" y="0.4" width="11.8" height="11.7" rx="0.6" fill="#d4d4d4" stroke="#7cb7cc" stroke-width="0.85"/></svg>
<div class="t" style="left:261.00px;top:108px;font-size:5.56px;line-height:6px;color:#4a4a4a;">33-120207-1002</div>
<div class="t" style="left:353.90px;top:108px;font-size:5.53px;line-height:6px;color:#4a4a4a;">AO-33-120207-1002_a</div>
<svg class="b" style="left:467.20px;top:106.47px;" width="7.40" height="7.40" viewBox="0 0 7.4 7.4"><circle cx="3.7" cy="3.7" r="3.7" fill="#33a176"/><path d="M2.2 2.1L3.7 5.4L5.2 2.1" stroke="#fff" stroke-width="0.9" fill="none" stroke-linejoin="round"/></svg>
<div class="b" style="left:199.60px;top:118.00px;width:292.70px;height:15.47px;background:#fff;"></div>
<div class="b" style="left:199.60px;top:117.75px;width:292.70px;height:0.60px;background:#e6e6e6;"></div>
<svg class="b" style="left:232.80px;top:124.48px;" width="2.00" height="3.40" viewBox="0 0 2 3.4"><path d="M0 0L2 1.7L0 3.4Z" fill="#3a3a3a"/></svg>
<svg class="b" style="left:243.10px;top:119.48px;overflow:hidden;" width="12.6" height="12.50" viewBox="0 0 12.6 12.50"><rect x="0.4" y="0.4" width="11.8" height="11.7" rx="0.6" fill="#1b4a78" stroke="#7cb7cc" stroke-width="0.85"/><circle cx="1.2" cy="6.2" r="0.35" fill="#7a9a3a"/></svg>
<div class="t" style="left:261.00px;top:123px;font-size:5.56px;line-height:6px;color:#4a4a4a;">27-110325-1007</div>
<div class="t" style="left:353.90px;top:123px;font-size:5.53px;line-height:6px;color:#4a4a4a;">AO-27-110325-1007_c</div>
<div class="b" style="left:199.60px;top:133.47px;width:292.70px;height:15.47px;background:#fff;"></div>
<div class="b" style="left:199.60px;top:133.22px;width:292.70px;height:0.60px;background:#e6e6e6;"></div>
<svg class="b" style="left:231.90px;top:140.80px;" width="3.40" height="2.00" viewBox="0 0 3.4 2"><path d="M0 0H3.4L1.7 2Z" fill="#3a3a3a"/></svg>
<svg class="b" style="left:243.10px;top:134.95px;overflow:hidden;" width="12.6" height="12.50" viewBox="0 0 12.6 12.50"><rect x="0.4" y="0.4" width="11.8" height="11.7" rx="0.6" fill="#d4d4d4" stroke="#7cb7cc" stroke-width="0.85"/><path d="M1 9.4L9.6 2.6L11.4 4L10.4 5.8Z" fill="#4a4a8a"/></svg>
<div class="t" style="left:261.00px;top:139px;font-size:5.50px;line-height:6px;color:#4a4a4a;letter-spacing:-0.183px;">WING ASSY, LH</div>
<div class="t" style="left:353.90px;top:139px;font-size:5.53px;line-height:6px;color:#4a4a4a;">AO-57-120427-1004_a</div>
<svg class="b" style="left:420.10px;top:137.50px;" width="8.00" height="7.40" viewBox="0 0 8 7.4"><rect x="0.3" y="0.3" width="5.4" height="5.2" fill="#8a8a8a" stroke="#6a6a6a" stroke-width="0.5"/><path d="M1.3 1.5V4.3M2.4 1.6H4.8M2.4 2.9H4.8" stroke="#e4e4e4" stroke-width="0.5"/><circle cx="5.7" cy="5.3" r="2" fill="#2f9ed0" stroke="#1878a8" stroke-width="0.35"/><path d="M4.9 5.4L5.5 6L6.6 4.7" stroke="#dff" stroke-width="0.4" fill="none"/></svg>
<div class="b" style="left:199.60px;top:148.94px;width:292.70px;height:15.47px;background:#fff;"></div>
<div class="b" style="left:199.60px;top:148.69px;width:292.70px;height:0.60px;background:#e6e6e6;"></div>
<svg class="b" style="left:245.80px;top:155.42px;" width="2.00" height="3.40" viewBox="0 0 2 3.4"><path d="M0 0L2 1.7L0 3.4Z" fill="#3a3a3a"/></svg>
<svg class="b" style="left:256.10px;top:150.42px;overflow:hidden;" width="12.6" height="12.50" viewBox="0 0 12.6 12.50"><rect x="0.4" y="0.4" width="11.8" height="11.7" rx="0.6" fill="#d4d4d4" stroke="#7cb7cc" stroke-width="0.85"/><path d="M1.2 5.0L2.4 5.4L2 6.4M8.4 6.4L10 6.8L9.4 7.6" stroke="#8a8440" stroke-width="0.7" fill="none"/></svg>
<div class="t" style="left:274.00px;top:154px;font-size:5.50px;line-height:6px;color:#4a4a4a;letter-spacing:-0.195px;">COVERS INSTALLATION, TIR...</div>
<div class="t" style="left:353.90px;top:154px;font-size:5.53px;line-height:6px;color:#4a4a4a;">AO-32-116886-1002_d</div>
<div class="b" style="left:199.60px;top:164.40px;width:292.70px;height:15.47px;background:#fff;"></div>
<div class="b" style="left:199.60px;top:164.15px;width:292.70px;height:0.60px;background:#e6e6e6;"></div>
<svg class="b" style="left:256.10px;top:165.89px;overflow:hidden;" width="12.6" height="12.50" viewBox="0 0 12.6 12.50"><rect x="0.4" y="0.4" width="11.8" height="11.7" rx="0.6" fill="#d4d4d4" stroke="#7cb7cc" stroke-width="0.85"/><ellipse cx="6.2" cy="6.4" rx="4.6" ry="3.4" fill="#eef6f9" stroke="#b4c8d0" stroke-width="0.6"/><ellipse cx="6.2" cy="5.8" rx="2.6" ry="1.5" fill="#cfdde2"/></svg>
<div class="t" style="left:274.00px;top:169px;font-size:5.50px;line-height:6px;color:#4a4a4a;letter-spacing:-0.156px;">GROMMET, SYNTHETIC AN...</div>
<div class="t" style="left:353.90px;top:169px;font-size:5.53px;line-height:6px;color:#4a4a4a;">ms35489-141</div>
<svg class="b" style="left:443.50px;top:167.94px;" width="8.40" height="8.40" viewBox="0 0 8.4 8.4"><circle cx="5" cy="5.2" r="2.75" fill="#f8c4da" stroke="#ee8db5" stroke-width="0.7"/><circle cx="5" cy="5.2" r="1.1" fill="#e0207a"/><path d="M0.7 1.0L1.6 1.6L2.7 3.5" stroke="#666" stroke-width="0.5" fill="none"/><path d="M0.3 0.8H1.5M0.9 0.2V1.4" stroke="#666" stroke-width="0.4"/></svg>
<div class="b" style="left:199.60px;top:179.87px;width:292.70px;height:15.47px;background:#fff;"></div>
<div class="b" style="left:199.60px;top:179.62px;width:292.70px;height:0.60px;background:#e6e6e6;"></div>
<svg class="b" style="left:245.80px;top:186.35px;" width="2.00" height="3.40" viewBox="0 0 2 3.4"><path d="M0 0L2 1.7L0 3.4Z" fill="#3a3a3a"/></svg>
<svg class="b" style="left:256.10px;top:181.35px;overflow:hidden;" width="12.6" height="12.50" viewBox="0 0 12.6 12.50"><rect x="0.4" y="0.4" width="11.8" height="11.7" rx="0.6" fill="#d4d4d4" stroke="#7cb7cc" stroke-width="0.85"/><path d="M8.4 1.4L10.4 0.8V11.6L8.4 11.2Z" fill="#8a9296"/></svg>
<div class="t" style="left:274.00px;top:185px;font-size:5.50px;line-height:6px;color:#4a4a4a;letter-spacing:-0.175px;">INSTALLATION, DOOR, MLG,...</div>
<div class="t" style="left:353.90px;top:185px;font-size:5.53px;line-height:6px;color:#4a4a4a;">AO-52-106741-1005_c</div>
<svg class="b" style="left:420.10px;top:183.90px;" width="8.00" height="7.40" viewBox="0 0 8 7.4"><rect x="0.3" y="0.3" width="5.4" height="5.2" fill="#8a8a8a" stroke="#6a6a6a" stroke-width="0.5"/><path d="M1.3 1.5V4.3M2.4 1.6H4.8M2.4 2.9H4.8" stroke="#e4e4e4" stroke-width="0.5"/><circle cx="5.7" cy="5.3" r="2" fill="#2f9ed0" stroke="#1878a8" stroke-width="0.35"/><path d="M4.9 5.4L5.5 6L6.6 4.7" stroke="#dff" stroke-width="0.4" fill="none"/></svg>
<div class="b" style="left:199.60px;top:195.34px;width:292.70px;height:15.47px;background:#fff;"></div>
<div class="b" style="left:199.60px;top:195.09px;width:292.70px;height:0.60px;background:#e6e6e6;"></div>
<svg class="b" style="left:245.80px;top:201.82px;" width="2.00" height="3.40" viewBox="0 0 2 3.4"><path d="M0 0L2 1.7L0 3.4Z" fill="#3a3a3a"/></svg>
<svg class="b" style="left:256.10px;top:196.82px;overflow:hidden;" width="12.6" height="12.50" viewBox="0 0 12.6 12.50"><rect x="0.4" y="0.4" width="11.8" height="11.7" rx="0.6" fill="#d4d4d4" stroke="#7cb7cc" stroke-width="0.85"/><path d="M3.4 6.2H5.4M6.4 6.2H8.4" stroke="#9aa0a4" stroke-width="0.5"/></svg>
<div class="t" style="left:274.00px;top:200px;font-size:5.50px;line-height:6px;color:#4a4a4a;letter-spacing:-0.170px;">BRAKE INSTL - WING, LH</div>
<div class="t" style="left:353.90px;top:200px;font-size:5.53px;line-height:6px;color:#4a4a4a;">AO-32-105469-1009_b</div>
<svg class="b" style="left:467.20px;top:199.27px;" width="7.40" height="7.40" viewBox="0 0 7.4 7.4"><circle cx="3.7" cy="3.7" r="3.7" fill="#33a176"/><path d="M2.2 2.1L3.7 5.4L5.2 2.1" stroke="#fff" stroke-width="0.9" fill="none" stroke-linejoin="round"/></svg>
<div class="b" style="left:199.60px;top:210.80px;width:292.70px;height:15.47px;background:#fff;"></div>
<div class="b" style="left:199.60px;top:210.55px;width:292.70px;height:0.60px;background:#e6e6e6;"></div>
<svg class="b" style="left:245.80px;top:217.29px;" width="2.00" height="3.40" viewBox="0 0 2 3.4"><path d="M0 0L2 1.7L0 3.4Z" fill="#3a3a3a"/></svg>
<svg class="b" style="left:256.10px;top:212.29px;overflow:hidden;" width="12.6" height="12.50" viewBox="0 0 12.6 12.50"><rect x="0.4" y="0.4" width="11.8" height="11.7" rx="0.6" fill="#d4d4d4" stroke="#7cb7cc" stroke-width="0.85"/><circle cx="4" cy="8" r="0.4" fill="#888"/><circle cx="7.4" cy="4.4" r="0.4" fill="#888"/><circle cx="8.8" cy="8.2" r="0.4" fill="#888"/></svg>
<div class="t" style="left:274.00px;top:216px;font-size:5.50px;line-height:6px;color:#4a4a4a;letter-spacing:-0.198px;">WIRE HARNESS INSTL - WIN...</div>
<div class="t" style="left:353.90px;top:216px;font-size:5.53px;line-height:6px;color:#4a4a4a;">AO-39-108113-1011_b</div>
<svg class="b" style="left:443.50px;top:214.34px;" width="8.40" height="8.40" viewBox="0 0 8.4 8.4"><circle cx="5" cy="5.2" r="2.75" fill="#f8c4da" stroke="#ee8db5" stroke-width="0.7"/><circle cx="5" cy="5.2" r="1.1" fill="#e0207a"/><path d="M0.7 1.0L1.6 1.6L2.7 3.5" stroke="#666" stroke-width="0.5" fill="none"/><path d="M0.3 0.8H1.5M0.9 0.2V1.4" stroke="#666" stroke-width="0.4"/></svg>
<div class="b" style="left:199.60px;top:226.27px;width:292.70px;height:15.47px;background:#fff;"></div>
<div class="b" style="left:199.60px;top:226.02px;width:292.70px;height:0.60px;background:#e6e6e6;"></div>
<svg class="b" style="left:245.80px;top:232.75px;" width="2.00" height="3.40" viewBox="0 0 2 3.4"><path d="M0 0L2 1.7L0 3.4Z" fill="#3a3a3a"/></svg>
<svg class="b" style="left:256.10px;top:227.75px;overflow:hidden;" width="12.6" height="12.50" viewBox="0 0 12.6 12.50"><rect x="0.4" y="0.4" width="11.8" height="11.7" rx="0.6" fill="#d4d4d4" stroke="#7cb7cc" stroke-width="0.85"/><path d="M1.2 10.4L11 2" stroke="#7f8a90" stroke-width="0.7"/></svg>
<div class="t" style="left:274.00px;top:231px;font-size:5.50px;line-height:6px;color:#4a4a4a;letter-spacing:-0.214px;">DE-ICE BOOT INSTALL, LH W...</div>
<div class="t" style="left:353.90px;top:231px;font-size:5.53px;line-height:6px;color:#4a4a4a;">AO-30-105602-1004_a</div>
<svg class="b" style="left:467.20px;top:230.20px;" width="7.40" height="7.40" viewBox="0 0 7.4 7.4"><circle cx="3.7" cy="3.7" r="3.7" fill="#33a176"/><path d="M2.2 2.1L3.7 5.4L5.2 2.1" stroke="#fff" stroke-width="0.9" fill="none" stroke-linejoin="round"/></svg>
<div class="b" style="left:199.60px;top:241.74px;width:292.70px;height:15.47px;background:#fff;"></div>
<div class="b" style="left:199.60px;top:241.49px;width:292.70px;height:0.60px;background:#e6e6e6;"></div>
<svg class="b" style="left:245.80px;top:248.22px;" width="2.00" height="3.40" viewBox="0 0 2 3.4"><path d="M0 0L2 1.7L0 3.4Z" fill="#3a3a3a"/></svg>
<svg class="b" style="left:256.10px;top:243.22px;overflow:hidden;" width="12.6" height="12.50" viewBox="0 0 12.6 12.50"><rect x="0.4" y="0.4" width="11.8" height="11.7" rx="0.6" fill="#d4d4d4" stroke="#7cb7cc" stroke-width="0.85"/><path d="M1.2 8.8L10.8 3.6L9.6 6.2L3 8.8Z" fill="#2a3440"/></svg>
<div class="t" style="left:274.00px;top:247px;font-size:5.50px;line-height:6px;color:#4a4a4a;letter-spacing:-0.175px;">ASSY, UPR PANEL, LH</div>
<div class="t" style="left:353.90px;top:247px;font-size:5.53px;line-height:6px;color:#4a4a4a;">AO-57-120429-1003_b</div>
<svg class="b" style="left:443.50px;top:245.27px;" width="8.40" height="8.40" viewBox="0 0 8.4 8.4"><circle cx="5" cy="5.2" r="2.75" fill="#f8c4da" stroke="#ee8db5" stroke-width="0.7"/><circle cx="5" cy="5.2" r="1.1" fill="#e0207a"/><path d="M0.7 1.0L1.6 1.6L2.7 3.5" stroke="#666" stroke-width="0.5" fill="none"/><path d="M0.3 0.8H1.5M0.9 0.2V1.4" stroke="#666" stroke-width="0.4"/></svg>
<div class="b" style="left:199.60px;top:257.20px;width:292.70px;height:15.47px;background:#fff;"></div>
<div class="b" style="left:199.60px;top:256.95px;width:292.70px;height:0.60px;background:#e6e6e6;"></div>
<svg class="b" style="left:245.80px;top:263.69px;" width="2.00" height="3.40" viewBox="0 0 2 3.4"><path d="M0 0L2 1.7L0 3.4Z" fill="#3a3a3a"/></svg>
<svg class="b" style="left:256.10px;top:258.69px;overflow:hidden;" width="12.6" height="12.50" viewBox="0 0 12.6 12.50"><rect x="0.4" y="0.4" width="11.8" height="11.7" rx="0.6" fill="#d4d4d4" stroke="#7cb7cc" stroke-width="0.85"/><circle cx="1" cy="8.6" r="0.35" fill="#777"/></svg>
<div class="t" style="left:274.00px;top:262px;font-size:5.50px;line-height:6px;color:#4a4a4a;letter-spacing:-0.273px;">INSTALLATION, ACCESS DO...</div>
<div class="t" style="left:353.90px;top:262px;font-size:5.53px;line-height:6px;color:#4a4a4a;">AO-57-110756-1005_a</div>
<svg class="b" style="left:420.10px;top:261.24px;" width="8.00" height="7.40" viewBox="0 0 8 7.4"><rect x="0.3" y="0.3" width="5.4" height="5.2" fill="#8a8a8a" stroke="#6a6a6a" stroke-width="0.5"/><path d="M1.3 1.5V4.3M2.4 1.6H4.8M2.4 2.9H4.8" stroke="#e4e4e4" stroke-width="0.5"/><circle cx="5.7" cy="5.3" r="2" fill="#2f9ed0" stroke="#1878a8" stroke-width="0.35"/><path d="M4.9 5.4L5.5 6L6.6 4.7" stroke="#dff" stroke-width="0.4" fill="none"/></svg>
<div class="b" style="left:199.60px;top:272.67px;width:292.70px;height:15.47px;background:#fff;"></div>
<div class="b" style="left:199.60px;top:272.42px;width:292.70px;height:0.60px;background:#e6e6e6;"></div>
<svg class="b" style="left:245.80px;top:279.15px;" width="2.00" height="3.40" viewBox="0 0 2 3.4"><path d="M0 0L2 1.7L0 3.4Z" fill="#3a3a3a"/></svg>
<svg class="b" style="left:256.10px;top:274.15px;overflow:hidden;" width="12.6" height="12.50" viewBox="0 0 12.6 12.50"><rect x="0.4" y="0.4" width="11.8" height="11.7" rx="0.6" fill="#d4d4d4" stroke="#7cb7cc" stroke-width="0.85"/><path d="M0.8 5L11.4 7V7.8L0.8 5.9Z" fill="#5f6a66"/></svg>
<div class="t" style="left:274.00px;top:278px;font-size:5.50px;line-height:6px;color:#4a4a4a;letter-spacing:-0.171px;">INSTALLATION, AILERON, LH</div>
<div class="t" style="left:353.90px;top:278px;font-size:5.53px;line-height:6px;color:#4a4a4a;">AO-57-103693-1007_c</div>
<svg class="b" style="left:443.50px;top:276.20px;" width="8.40" height="8.40" viewBox="0 0 8.4 8.4"><circle cx="5" cy="5.2" r="2.75" fill="#f8c4da" stroke="#ee8db5" stroke-width="0.7"/><circle cx="5" cy="5.2" r="1.1" fill="#e0207a"/><path d="M0.7 1.0L1.6 1.6L2.7 3.5" stroke="#666" stroke-width="0.5" fill="none"/><path d="M0.3 0.8H1.5M0.9 0.2V1.4" stroke="#666" stroke-width="0.4"/></svg>
<div class="b" style="left:199.60px;top:288.14px;width:292.70px;height:15.47px;background:#fff;"></div>
<div class="b" style="left:199.60px;top:287.89px;width:292.70px;height:0.60px;background:#e6e6e6;"></div>
<svg class="b" style="left:245.80px;top:294.62px;" width="2.00" height="3.40" viewBox="0 0 2 3.4"><path d="M0 0L2 1.7L0 3.4Z" fill="#3a3a3a"/></svg>
<svg class="b" style="left:256.10px;top:289.62px;overflow:hidden;" width="12.6" height="12.50" viewBox="0 0 12.6 12.50"><rect x="0.4" y="0.4" width="11.8" height="11.7" rx="0.6" fill="#d4d4d4" stroke="#7cb7cc" stroke-width="0.85"/><path d="M3.6 6.4H4.6M7 6.8H8" stroke="#a0a4a8" stroke-width="0.5"/></svg>
<div class="t" style="left:274.00px;top:293px;font-size:5.50px;line-height:6px;color:#4a4a4a;letter-spacing:-0.239px;">AILERON WING CONTROLS, ...</div>
<div class="t" style="left:353.90px;top:293px;font-size:5.53px;line-height:6px;color:#4a4a4a;">AO-27-105476-1006_b</div>
<svg class="b" style="left:467.20px;top:292.07px;" width="7.40" height="7.40" viewBox="0 0 7.4 7.4"><circle cx="3.7" cy="3.7" r="3.7" fill="#33a176"/><path d="M2.2 2.1L3.7 5.4L5.2 2.1" stroke="#fff" stroke-width="0.9" fill="none" stroke-linejoin="round"/></svg>
<div class="b" style="left:199.60px;top:303.61px;width:292.70px;height:15.47px;background:#fff;"></div>
<div class="b" style="left:199.60px;top:303.36px;width:292.70px;height:0.60px;background:#e6e6e6;"></div>
<svg class="b" style="left:245.80px;top:310.09px;" width="2.00" height="3.40" viewBox="0 0 2 3.4"><path d="M0 0L2 1.7L0 3.4Z" fill="#3a3a3a"/></svg>
<svg class="b" style="left:256.10px;top:305.09px;overflow:hidden;" width="12.6" height="12.50" viewBox="0 0 12.6 12.50"><rect x="0.4" y="0.4" width="11.8" height="11.7" rx="0.6" fill="#d4d4d4" stroke="#7cb7cc" stroke-width="0.85"/><path d="M0.8 9.6L11.2 3.4L11.6 4.2L1.2 10.4Z" fill="#4a4a9a"/></svg>
<div class="t" style="left:274.00px;top:309px;font-size:5.50px;line-height:6px;color:#4a4a4a;letter-spacing:-0.168px;">INSTALLATION, FLAP, LH</div>
<div class="t" style="left:353.90px;top:309px;font-size:5.53px;line-height:6px;color:#4a4a4a;">AO-57-103695-1007_a</div>
<svg class="b" style="left:443.50px;top:307.14px;" width="8.40" height="8.40" viewBox="0 0 8.4 8.4"><circle cx="5" cy="5.2" r="2.75" fill="#f8c4da" stroke="#ee8db5" stroke-width="0.7"/><circle cx="5" cy="5.2" r="1.1" fill="#e0207a"/><path d="M0.7 1.0L1.6 1.6L2.7 3.5" stroke="#666" stroke-width="0.5" fill="none"/><path d="M0.3 0.8H1.5M0.9 0.2V1.4" stroke="#666" stroke-width="0.4"/></svg>
<div class="b" style="left:199.60px;top:319.07px;width:292.70px;height:15.47px;background:#fff;"></div>
<div class="b" style="left:199.60px;top:318.82px;width:292.70px;height:0.60px;background:#e6e6e6;"></div>
<svg class="b" style="left:232.80px;top:325.56px;" width="2.00" height="3.40" viewBox="0 0 2 3.4"><path d="M0 0L2 1.7L0 3.4Z" fill="#3a3a3a"/></svg>
<svg class="b" style="left:243.10px;top:320.56px;overflow:hidden;" width="12.6" height="12.50" viewBox="0 0 12.6 12.50"><rect x="0.4" y="0.4" width="11.8" height="11.7" rx="0.6" fill="#050505" stroke="#2f6478" stroke-width="0.85"/><path d="M2.4 7.6L4.6 4.8L5.4 2.6L6.4 4.6L9 5.6L10.6 7.4L6 8.6Z" fill="#3aa878"/><path d="M2 8.4C4.6 9.6 8.4 9 11 7.2L11 8.2C8.6 10 4.4 10.6 2 9.4Z" fill="#e8a838"/></svg>
<div class="t" style="left:261.00px;top:324px;font-size:5.56px;line-height:6px;color:#4a4a4a;">52-118675-1001</div>
<div class="t" style="left:353.90px;top:324px;font-size:5.53px;line-height:6px;color:#4a4a4a;">AO-52-118675-1001_d</div>
<div class="b" style="left:199.60px;top:334.54px;width:292.70px;height:15.47px;background:#fff;"></div>
<div class="b" style="left:199.60px;top:334.29px;width:292.70px;height:0.60px;background:#e6e6e6;"></div>
<svg class="b" style="left:232.80px;top:341.02px;" width="2.00" height="3.40" viewBox="0 0 2 3.4"><path d="M0 0L2 1.7L0 3.4Z" fill="#3a3a3a"/></svg>
<svg class="b" style="left:243.10px;top:336.02px;overflow:hidden;" width="12.6" height="12.50" viewBox="0 0 12.6 12.50"><rect x="0.4" y="0.4" width="11.8" height="11.7" rx="0.6" fill="#050505" stroke="#2f6478" stroke-width="0.85"/><ellipse cx="6.4" cy="6.6" rx="4.4" ry="1.5" fill="none" stroke="#7468cc" stroke-width="0.8" transform="rotate(-8 6.4 6.6)"/><path d="M2.6 7.4L5.4 6.8" stroke="#c8c0f0" stroke-width="0.5"/></svg>
<div class="t" style="left:261.00px;top:340px;font-size:5.56px;line-height:6px;color:#4a4a4a;">57-121214-1001</div>
<div class="t" style="left:353.90px;top:340px;font-size:5.53px;line-height:6px;color:#4a4a4a;">AO-57-121214-1001_f</div>
<svg class="b" style="left:467.20px;top:338.47px;" width="7.40" height="7.40" viewBox="0 0 7.4 7.4"><circle cx="3.7" cy="3.7" r="3.7" fill="#33a176"/><path d="M2.2 2.1L3.7 5.4L5.2 2.1" stroke="#fff" stroke-width="0.9" fill="none" stroke-linejoin="round"/></svg>
<div class="b" style="left:199.60px;top:350.01px;width:292.70px;height:15.47px;background:#fff;"></div>
<div class="b" style="left:199.60px;top:349.76px;width:292.70px;height:0.60px;background:#e6e6e6;"></div>
<svg class="b" style="left:232.80px;top:356.49px;" width="2.00" height="3.40" viewBox="0 0 2 3.4"><path d="M0 0L2 1.7L0 3.4Z" fill="#3a3a3a"/></svg>
<svg class="b" style="left:243.10px;top:351.49px;overflow:hidden;" width="12.6" height="12.50" viewBox="0 0 12.6 12.50"><rect x="0.4" y="0.4" width="11.8" height="11.7" rx="0.6" fill="#d4d4d4" stroke="#7cb7cc" stroke-width="0.85"/><path d="M4.2 1.8L5.4 1.4L7 6.4L6 7Z" fill="#7a6a9a"/><path d="M3.4 2.4L6.4 3.4" stroke="#8a8a8a" stroke-width="0.5"/><circle cx="7" cy="8.4" r="1.9" fill="#4a7a3c"/><circle cx="7" cy="8.4" r="0.7" fill="#a8c890"/><path d="M4.4 6.6L6 9.6" stroke="#6a6a6a" stroke-width="0.5"/></svg>
<div class="t" style="left:261.00px;top:355px;font-size:5.56px;line-height:6px;color:#4a4a4a;">32-104910-1008</div>
<div class="t" style="left:353.90px;top:355px;font-size:5.53px;line-height:6px;color:#4a4a4a;">AO-32-104910-1008_a</div>
<svg class="b" style="left:420.10px;top:354.04px;" width="8.00" height="7.40" viewBox="0 0 8 7.4"><rect x="0.3" y="0.3" width="5.4" height="5.2" fill="#8a8a8a" stroke="#6a6a6a" stroke-width="0.5"/><path d="M1.3 1.5V4.3M2.4 1.6H4.8M2.4 2.9H4.8" stroke="#e4e4e4" stroke-width="0.5"/><circle cx="5.7" cy="5.3" r="2" fill="#2f9ed0" stroke="#1878a8" stroke-width="0.35"/><path d="M4.9 5.4L5.5 6L6.6 4.7" stroke="#dff" stroke-width="0.4" fill="none"/></svg>
<div class="b" style="left:199.60px;top:365.47px;width:292.70px;height:15.47px;background:#fff;"></div>
<div class="b" style="left:199.60px;top:365.22px;width:292.70px;height:0.60px;background:#e6e6e6;"></div>
<svg class="b" style="left:232.80px;top:371.96px;" width="2.00" height="3.40" viewBox="0 0 2 3.4"><path d="M0 0L2 1.7L0 3.4Z" fill="#3a3a3a"/></svg>
<svg class="b" style="left:243.10px;top:366.96px;overflow:hidden;" width="12.6" height="12.50" viewBox="0 0 12.6 12.50"><rect x="0.4" y="0.4" width="11.8" height="11.7" rx="0.6" fill="#d4d4d4" stroke="#7cb7cc" stroke-width="0.85"/><path d="M0.8 8.8L11.4 3.6L11.6 4.8L1.2 9.8Z" fill="#4a62b8"/><path d="M3.4 7.6L8.6 5.2L8.8 5.9L3.8 8.2Z" fill="#e89a4a"/></svg>
<div class="t" style="left:261.00px;top:371px;font-size:5.56px;line-height:6px;color:#4a4a4a;">27-122038-1002</div>
<div class="t" style="left:353.90px;top:371px;font-size:5.53px;line-height:6px;color:#4a4a4a;">AO-27-122038-1002_b</div>
<div class="b" style="left:199.60px;top:380.94px;width:292.70px;height:15.47px;background:#fff;"></div>
<div class="b" style="left:199.60px;top:380.69px;width:292.70px;height:0.60px;background:#e6e6e6;"></div>
<svg class="b" style="left:231.90px;top:388.27px;" width="3.40" height="2.00" viewBox="0 0 3.4 2"><path d="M0 0H3.4L1.7 2Z" fill="#3a3a3a"/></svg>
<svg class="b" style="left:243.10px;top:382.42px;overflow:hidden;" width="12.6" height="12.50" viewBox="0 0 12.6 12.50"><rect x="0.4" y="0.4" width="11.8" height="11.7" rx="0.6" fill="#d4d4d4" stroke="#7cb7cc" stroke-width="0.85"/><path d="M2 5H2.8M5 7.2H5.8M8.6 6H9.4" stroke="#9aa0a4" stroke-width="0.5"/></svg>
<div class="t" style="left:261.00px;top:386px;font-size:5.56px;line-height:6px;color:#4a4a4a;">57-119721-1004</div>
<div class="t" style="left:353.90px;top:386px;font-size:5.53px;line-height:6px;color:#4a4a4a;">AO-57-119721-1004_a</div>
<svg class="b" style="left:467.20px;top:384.87px;" width="7.40" height="7.40" viewBox="0 0 7.4 7.4"><circle cx="3.7" cy="3.7" r="3.7" fill="#33a176"/><path d="M2.2 2.1L3.7 5.4L5.2 2.1" stroke="#fff" stroke-width="0.9" fill="none" stroke-linejoin="round"/></svg>
<div class="b" style="left:199.60px;top:396.41px;width:292.70px;height:15.47px;background:#fff;"></div>
<div class="b" style="left:199.60px;top:396.16px;width:292.70px;height:0.60px;background:#e6e6e6;"></div>
<svg class="b" style="left:256.10px;top:397.89px;overflow:hidden;" width="12.6" height="12.50" viewBox="0 0 12.6 12.50"><rect x="0.4" y="0.4" width="11.8" height="11.7" rx="0.6" fill="#d4d4d4" stroke="#7cb7cc" stroke-width="0.85"/><path d="M5.8 0.8H7.2L7.4 6.6L8.2 11.6H4.8L5.6 6.6Z" fill="#f2eeb0"/><path d="M5.6 4.4H7.4M5.5 7H7.5" stroke="#d4cc80" stroke-width="0.4"/></svg>
<div class="t" style="left:274.00px;top:401px;font-size:5.56px;line-height:6px;color:#4a4a4a;">hc6223 x2</div>
<div class="t" style="left:353.90px;top:401px;font-size:5.53px;line-height:6px;color:#4a4a4a;">hc6223-4-02</div>
<div class="b" style="left:199.60px;top:411.87px;width:292.70px;height:15.47px;background:#fff;"></div>
<div class="b" style="left:199.60px;top:411.62px;width:292.70px;height:0.60px;background:#e6e6e6;"></div>
<svg class="b" style="left:256.10px;top:413.36px;overflow:hidden;" width="12.6" height="12.50" viewBox="0 0 12.6 12.50"><rect x="0.4" y="0.4" width="11.8" height="11.7" rx="0.6" fill="#d4d4d4" stroke="#7cb7cc" stroke-width="0.85"/><path d="M0.7 3.6L7.6 3.2C10.4 3.2 11.9 4.6 11.9 6.4C11.9 8.4 10.6 9.6 8 9.8L0.7 8.6Z" fill="#a8d020"/><ellipse cx="8.6" cy="6.4" rx="2.2" ry="1.6" fill="#d4f060"/><path d="M0.7 8.6L8 9.8" stroke="#7a9a10" stroke-width="0.4"/></svg>
<div class="t" style="left:274.00px;top:417px;font-size:5.50px;line-height:6px;color:#4a4a4a;letter-spacing:-0.261px;">NUT,SELF LOCKING,PLATE,O...</div>
<div class="t" style="left:353.90px;top:417px;font-size:5.53px;line-height:6px;color:#4a4a4a;">ms21062l08</div>
<div class="b" style="left:199.60px;top:427.34px;width:292.70px;height:15.47px;background:#fff;"></div>
<div class="b" style="left:199.60px;top:427.09px;width:292.70px;height:0.60px;background:#e6e6e6;"></div>
<svg class="b" style="left:256.10px;top:428.82px;overflow:hidden;" width="12.6" height="12.50" viewBox="0 0 12.6 12.50"><rect x="0.4" y="0.4" width="11.8" height="11.7" rx="0.6" fill="#050505" stroke="#2f6478" stroke-width="0.85"/><path d="M3.8 3.6C5 2.8 7.6 2.8 8.8 3.6L8.4 5.6H4.2Z" fill="#2a4cff"/><path d="M5.2 5.6H7.4L7.2 9.8H5.4Z" fill="#2a4cff"/></svg>
<div class="t" style="left:274.00px;top:432px;font-size:5.50px;line-height:6px;color:#4a4a4a;letter-spacing:-0.186px;">RIVET, BLIND, BULBED, .125 ...</div>
<div class="t" style="left:353.90px;top:432px;font-size:5.53px;line-height:6px;color:#4a4a4a;">nas1919c04-03</div>
<div class="b" style="left:199.60px;top:442.81px;width:292.70px;height:15.47px;background:#fff;"></div>
<div class="b" style="left:199.60px;top:442.56px;width:292.70px;height:0.60px;background:#e6e6e6;"></div>
<svg class="b" style="left:256.10px;top:444.29px;overflow:hidden;" width="12.6" height="12.50" viewBox="0 0 12.6 12.50"><rect x="0.4" y="0.4" width="11.8" height="11.7" rx="0.6" fill="#d4d4d4" stroke="#7cb7cc" stroke-width="0.85"/><path d="M0.8 8.4C4 6.4 8 4.4 11.6 3.6L11.8 5.8C8 6.8 4.4 8.6 1.4 10.6Z" fill="#8c969a"/></svg>
<div class="t" style="left:274.00px;top:448px;font-size:5.56px;line-height:6px;color:#4a4a4a;">12241003</div>
<div class="t" style="left:353.90px;top:448px;font-size:5.53px;line-height:6px;color:#4a4a4a;">AO-12241003_a</div>
<div class="b" style="left:199.60px;top:458.27px;width:292.70px;height:15.47px;background:#fff;"></div>
<div class="b" style="left:199.60px;top:458.02px;width:292.70px;height:0.60px;background:#e6e6e6;"></div>
<svg class="b" style="left:245.80px;top:464.76px;" width="2.00" height="3.40" viewBox="0 0 2 3.4"><path d="M0 0L2 1.7L0 3.4Z" fill="#3a3a3a"/></svg>
<svg class="b" style="left:256.10px;top:459.76px;overflow:hidden;" width="12.6" height="12.50" viewBox="0 0 12.6 12.50"><rect x="0.4" y="0.4" width="11.8" height="11.7" rx="0.6" fill="#d4d4d4" stroke="#7cb7cc" stroke-width="0.85"/><path d="M1.6 7.8C1.8 4.6 4 3.6 7 3.6C9.6 3.6 11 4.8 11 7.6L9.4 7.8C9.2 6 8.4 5.6 6.6 5.6C4.6 5.6 3.6 6.2 3.4 8.2Z" fill="#ece47a"/><circle cx="4.4" cy="6" r="0.6" fill="#d8a84a"/></svg>
<div class="t" style="left:274.00px;top:463px;font-size:5.56px;line-height:6px;color:#4a4a4a;">57-122453-1001</div>
<div class="t" style="left:353.90px;top:463px;font-size:5.53px;line-height:6px;color:#4a4a4a;">AO-57-122453-1001_a</div>
<div class="b" style="left:199.60px;top:473.74px;width:292.70px;height:15.47px;background:#fff;"></div>
<div class="b" style="left:199.60px;top:473.49px;width:292.70px;height:0.60px;background:#e6e6e6;"></div>
<svg class="b" style="left:245.80px;top:480.23px;" width="2.00" height="3.40" viewBox="0 0 2 3.4"><path d="M0 0L2 1.7L0 3.4Z" fill="#3a3a3a"/></svg>
<svg class="b" style="left:256.10px;top:475.23px;overflow:hidden;" width="12.6" height="12.50" viewBox="0 0 12.6 12.50"><rect x="0.4" y="0.4" width="11.8" height="11.7" rx="0.6" fill="#d4d4d4" stroke="#7cb7cc" stroke-width="0.85"/><path d="M1.8 9.6C1.6 6.4 4 4.4 7 3.2L10.8 2.4L10.4 4.6C8 5.4 6.6 7 6 9.8L3.2 10.8Z" fill="#7ee0b4"/><circle cx="4.2" cy="7.6" r="1.3" fill="#d8e070" stroke="#8ab860" stroke-width="0.3"/></svg>
<div class="t" style="left:274.00px;top:479px;font-size:5.56px;line-height:6px;color:#4a4a4a;">57-122467-1001</div>
<div class="t" style="left:353.90px;top:479px;font-size:5.53px;line-height:6px;color:#4a4a4a;">AO-57-122467-1001_a</div>
<div class="b" style="left:199.60px;top:489.21px;width:292.70px;height:13.79px;background:#fff;"></div>
<div class="b" style="left:199.60px;top:488.96px;width:292.70px;height:0.60px;background:#e6e6e6;"></div>
<svg class="b" style="left:245.80px;top:495.69px;" width="2.00" height="3.40" viewBox="0 0 2 3.4"><path d="M0 0L2 1.7L0 3.4Z" fill="#3a3a3a"/></svg>
<svg class="b" style="left:256.10px;top:490.69px;overflow:hidden;" width="12.6" height="12.31" viewBox="0 0 12.6 12.31"><rect x="0.4" y="0.4" width="11.8" height="11.7" rx="0.6" fill="#d4d4d4" stroke="#7cb7cc" stroke-width="0.85"/><path d="M1 5.2C3 3.6 8 3.4 11.6 4.4L11.6 9L9.4 9.4C8.6 7.6 6.4 7.6 5.6 9.4L1.4 9.4Z" fill="#c4ec20"/><path d="M2 5.8C4 4.8 8 4.8 10.6 5.4" stroke="#e8ff80" stroke-width="0.6" fill="none"/></svg>
<div class="t" style="left:274.00px;top:494px;font-size:5.56px;line-height:6px;color:#4a4a4a;">57-122449-1001</div>
<div class="b" style="left:350.05px;top:71.60px;width:0.60px;height:431.40px;background:#dcdcdc;"></div>
<div class="b" style="left:492.30px;top:71.60px;width:7.40px;height:424.00px;background:#f1f1f1;"></div>
<div class="b" style="left:493.40px;top:80.20px;width:5.60px;height:191.00px;background:#c1c1c1;"></div>
<svg class="b" style="left:494.80px;top:75.20px;" width="3.40" height="2.00" viewBox="0 0 3.4 2"><path d="M0 2H3.4L1.7 0Z" fill="#a0a0a0"/></svg>
<svg class="b" style="left:494.80px;top:490.00px;" width="3.40" height="2.00" viewBox="0 0 3.4 2"><path d="M0 0H3.4L1.7 2Z" fill="#505050"/></svg>
<div class="b" style="left:350.40px;top:495.60px;width:142.00px;height:7.00px;background:#f1f1f1;"></div>
<div class="b" style="left:358.40px;top:496.40px;width:7.60px;height:5.40px;background:#c1c1c1;"></div>
<svg class="b" style="left:353.20px;top:497.60px;" width="2.00" height="3.00" viewBox="0 0 2 3"><path d="M2 0V3L0 1.5Z" fill="#a0a0a0"/></svg>
<svg class="b" style="left:487.60px;top:497.60px;" width="2.00" height="3.00" viewBox="0 0 2 3"><path d="M0 0V3L2 1.5Z" fill="#505050"/></svg>
<div class="b" style="left:492.30px;top:495.60px;width:7.40px;height:7.00px;background:#dcdcdc;"></div>
<div class="b" style="left:500.90px;top:39.40px;width:369.30px;height:466.60px;background:#fff;"></div>
<div class="b" style="left:504.20px;top:39.40px;width:0.50px;height:467.00px;background:#e6e6e6;"></div>
<div class="t" style="left:512.00px;top:44px;font-size:6.65px;line-height:7px;color:#1b7fa0;">3D</div>
<div class="b" style="left:512.00px;top:54.20px;width:8.60px;height:1.30px;background:#4aa3be;"></div>
<div class="t" style="left:528.30px;top:44px;font-size:7.07px;line-height:7px;color:#2e2e2e;-webkit-text-stroke:0.22px #2e2e2e;">Variant Configuration</div>
<div class="t" style="left:601.70px;top:44px;font-size:6.84px;line-height:7px;color:#2e2e2e;-webkit-text-stroke:0.22px #2e2e2e;">Overview</div>
<div class="t" style="left:638.00px;top:44px;font-size:6.62px;line-height:7px;color:#2e2e2e;-webkit-text-stroke:0.22px #2e2e2e;">Parameters</div>
<div class="t" style="left:679.60px;top:44px;font-size:6.42px;line-height:7px;color:#2e2e2e;-webkit-text-stroke:0.22px #2e2e2e;">Finishes</div>
<div class="t" style="left:711.50px;top:44px;font-size:6.74px;line-height:7px;color:#2e2e2e;-webkit-text-stroke:0.22px #2e2e2e;">Classification</div>
<div class="t" style="left:758.90px;top:44px;font-size:6.83px;line-height:7px;color:#2e2e2e;-webkit-text-stroke:0.22px #2e2e2e;">Made From</div>
<div class="t" style="left:801.50px;top:44px;font-size:6.66px;line-height:7px;color:#2e2e2e;-webkit-text-stroke:0.22px #2e2e2e;">Where Used</div>
<svg class="b" style="left:854.20px;top:47.20px;" width="3.00" height="5.00" viewBox="0 0 3 5"><path d="M0.4 0.4L2.4 2.4L0.4 4.4" fill="none" stroke="#bdbdbd" stroke-width="0.55"/></svg>
<svg class="b" style="left:515.80px;top:64.30px;" width="8.00" height="8.00" viewBox="0 0 8 8"><g fill="none" stroke="#b4b4b4" stroke-width="0.55" stroke-linejoin="round" stroke-linecap="round"><rect x="0.4" y="0.4" width="5" height="5"/><path d="M2 7H7V2M1.6 2.2L2.8 3.6L4.2 1.8"/><path d="M6 6.2V7.8M5.2 7H6.8"/></g></svg>
<div class="t" style="left:525.00px;top:63px;font-size:4.55px;line-height:5px;color:#b4b4b4;">Capture</div>
<div class="t" style="left:525.00px;top:69px;font-size:4.55px;line-height:5px;color:#b4b4b4;">Gallery</div>
<svg class="b" style="left:549.20px;top:65.00px;" width="8.00" height="6.60" viewBox="0 0 8 6.6"><g fill="none" stroke="#b4b4b4" stroke-width="0.55" stroke-linejoin="round" stroke-linecap="round"><rect x="0.4" y="0.4" width="5.2" height="4.8"/><path d="M1.6 1.6L4.2 4M5.8 5.8H7.6"/></g></svg>
<div class="t" style="left:558.00px;top:63px;font-size:4.55px;line-height:5px;color:#b4b4b4;">Quick</div>
<div class="t" style="left:558.00px;top:69px;font-size:4.55px;line-height:5px;color:#b4b4b4;">Measure</div>
<svg class="b" style="left:583.20px;top:64.20px;" width="8.40" height="8.40" viewBox="0 0 8.4 8.4"><g stroke-linejoin="round"><path d="M4.2 0.5L7.8 2.2V6.2L4.2 7.9L0.6 6.2V2.2Z" fill="#fff" stroke="#333" stroke-width="0.6"/><path d="M0.6 2.2L4.2 3.9L7.8 2.2M4.2 3.9V7.9" fill="none" stroke="#333" stroke-width="0.6"/><path d="M4.6 4.4L7.4 3.1V5.9L4.6 7.2Z" fill="#555"/><path d="M5.6 5.4L7.8 8" stroke="#111" stroke-width="0.8"/></g></svg>
<div class="t" style="left:593.00px;top:63px;font-size:4.55px;line-height:5px;color:#505050;">Pick</div>
<div class="t" style="left:593.00px;top:69px;font-size:4.55px;line-height:5px;color:#505050;">Filter</div>
<svg class="b" style="left:592.20px;top:74.60px;" width="2.60" height="1.40" viewBox="0 0 2.6 1.4"><path d="M0.1 0.1L1.3 1.2L2.5 0.1" fill="none" stroke="#9a9a9a" stroke-width="0.4"/></svg>
<svg class="b" style="left:610.40px;top:64.60px;" width="7.60" height="7.60" viewBox="0 0 7.6 7.6"><g fill="none" stroke="#b4b4b4" stroke-width="0.55" stroke-linejoin="round" stroke-linecap="round"><path d="M0.4 2.2V0.4H2.2M5.4 0.4H7.2V2.2M7.2 5.4V7.2H5.4M2.2 7.2H0.4V5.4"/><path d="M2 2L3.2 3.2M5.6 2L4.4 3.2M2 5.6L3.2 4.4M5.6 5.6L4.4 4.4"/></g></svg>
<div class="t" style="left:620.40px;top:66px;font-size:4.55px;line-height:5px;color:#b4b4b4;">Fit</div>
<svg class="b" style="left:631.80px;top:66.60px;" width="8.40" height="4.00" viewBox="0 0 8.4 4"><g fill="none" stroke="#b4b4b4" stroke-width="0.55" stroke-linejoin="round" stroke-linecap="round"><path d="M0.4 0.4V3.6M8 0.4V3.6M0.4 2H3.4M8 2H5M2.4 1L3.4 2L2.4 3M6 1L5 2L6 3"/></g></svg>
<div class="t" style="left:641.20px;top:66px;font-size:4.55px;line-height:5px;color:#b4b4b4;">Measure</div>
<svg class="b" style="left:666.40px;top:64.80px;" width="7.60" height="7.60" viewBox="0 0 7.6 7.6"><g fill="none" stroke="#b4b4b4" stroke-width="0.55" stroke-linejoin="round" stroke-linecap="round"><path d="M0.6 7L6.6 1M5 0.8H6.8V2.6M0.6 7.2L1.6 5.2"/></g></svg>
<div class="t" style="left:676.30px;top:66px;font-size:4.55px;line-height:5px;color:#b4b4b4;">Query</div>
<svg class="b" style="left:695.60px;top:64.60px;" width="7.20" height="7.80" viewBox="0 0 7.2 7.8"><g fill="none" stroke="#b4b4b4" stroke-width="0.6" stroke-linejoin="round" stroke-linecap="round"><path d="M0.5 2.4L4.6 0.5L6.6 1.4V5.4L2.6 7.4L0.5 6.4Z"/><path d="M2.6 3.4V7.4M2.6 3.4L6.6 1.4M0.5 2.4L2.6 3.4"/></g></svg>
<div class="t" style="left:705.10px;top:66px;font-size:4.55px;line-height:5px;color:#b4b4b4;">Section</div>
<svg class="b" style="left:727.60px;top:64.60px;" width="7.80" height="7.80" viewBox="0 0 7.8 7.8"><g fill="none" stroke="#b4b4b4" stroke-width="0.55" stroke-linejoin="round" stroke-linecap="round"><rect x="0.4" y="0.4" width="7" height="7"/><path d="M2.6 0.4V7.4M0.4 2.7H7.4M0.4 5H7.4"/></g></svg>
<div class="t" style="left:737.70px;top:66px;font-size:4.55px;line-height:5px;color:#b4b4b4;">PMI</div>
<svg class="b" style="left:839.40px;top:63.80px;" width="5.40" height="8.60" viewBox="0 0 5.4 8.6"><g fill="none" stroke="#555" stroke-width="0.5" stroke-linejoin="round" stroke-linecap="round"><path d="M0.6 2.2V0.8H2M3.4 0.8H4.8V2.2"/><path d="M0.6 6.2V7.6H2M3.4 7.6H4.8V6.2"/></g></svg>
<div class="t" style="left:847.90px;top:63px;font-size:4.55px;line-height:5px;color:#505050;">Full</div>
<div class="t" style="left:847.90px;top:69px;font-size:4.55px;line-height:5px;color:#505050;">Screen</div>
<div class="b" style="left:512.00px;top:77.20px;width:353.50px;height:423.90px;background:#d4d4d4;"></div>
<div class="b" style="left:512.00px;top:77.20px;width:353.40px;height:2.60px;background:#e4e4e4;"></div>
<svg class="b" style="left:512px;top:77.2px;" width="353.4" height="423.9" viewBox="512 77.2 353.4 423.9"><path d="M604.4 233.2L615 245.4" stroke="#23292c" stroke-width="1.7" fill="none"/><path d="M607.4 236.4l1.4 -.6M612 242.6l1.4 -.6" stroke="#2a8a9a" stroke-width="0.7"/><path d="M616.4 236L616.9 262" stroke="#ececec" stroke-width="1.2" fill="none"/><path d="M616.4 238h1M616.4 241h1M616.5 244h1M616.5 247h1" stroke="#777" stroke-width="0.4"/><path d="M611.3 246.8L615.6 244.6L618 250L617.8 263L613.8 263.4L611 256Z" fill="#6f777b" stroke="#23292c" stroke-width="0.45"/><circle cx="613.4" cy="252.8" r="2" fill="#c9cdd0" stroke="#23292c" stroke-width="0.45"/><circle cx="614" cy="259.6" r="1.7" fill="#b9bec1" stroke="#23292c" stroke-width="0.4"/><ellipse cx="616.7" cy="253.7" rx="1.35" ry="2.1" fill="#ece40c" stroke="#7a7600" stroke-width="0.35"/><path d="M618.4 234L631 236.4V266L618.4 265Z" fill="#8da2a9" stroke="#2f3a3f" stroke-width="0.55"/><path d="M621 240.6L626.8 238.6L627.2 240.4L621.4 242.6Z" fill="#b5c6cb" stroke="#2f3a3f" stroke-width="0.4"/><path d="M622 254.6C621.8 248.4 624 246.2 627.8 245.6M627.8 245.6V257.4M624 249.8L627.4 248.6M622.2 258.8C623.4 259.8 625.6 259.6 626.8 258.4" fill="none" stroke="#2f3a3f" stroke-width="0.6"/><g transform="rotate(14 625.4 271.9)"><ellipse cx="622.4" cy="271.9" rx="9.6" ry="14" fill="#e4e4e4" stroke="#23292c" stroke-width="0.6"/><ellipse cx="623.7" cy="271.9" rx="9.6" ry="14" fill="#ededed" stroke="#23292c" stroke-width="0.5"/><ellipse cx="625.0" cy="271.9" rx="9.6" ry="14" fill="#f0f0f0" stroke="#23292c" stroke-width="0.5"/><ellipse cx="627.4" cy="271.9" rx="10" ry="14.2" fill="#f4f4f4" stroke="#23292c" stroke-width="0.6"/><ellipse cx="628.6" cy="272" rx="6.7" ry="9.8" fill="#d6d9d9" stroke="#4a5458" stroke-width="0.45"/><ellipse cx="629.2" cy="272.2" rx="5.3" ry="8.1" fill="#c3e8b9" stroke="#6a8a66" stroke-width="0.4"/><path d="M627.6 270.4l1 .4M630.2 270l.6 1.2M628.4 274l1.2-.6M630.6 273.4l-.4 1.4M629 276.4l1-.2" stroke="#6f9468" stroke-width="0.4"/></g><polygon points="530.0,218.2 534.4,217.1 547.8,208.8 554.4,206.0 570.0,199.9 582.2,196.6 586.7,193.8 592.0,192.4 597.8,192.0 604.4,192.8 620.0,196.6 650.0,204.7 679.3,213.3 720.0,225.0 773.3,240.3 813.3,253.7 833.3,257.5 833.6,258.4 828.0,261.8 818.0,266.0 808.0,269.4 802.4,270.4 760.0,263.0 720.0,254.5 710.0,252.7 663.3,243.3 631.3,237.3 610.0,233.4 592.2,229.9 586.7,228.9 531.0,228.9 527.4,227.6 527.0,224.5 528.2,220.6" fill="#a3b7bd" stroke="#2f3a3f" stroke-width="0.8" stroke-linejoin="round"/><path d="M594.6 193.4L615.7 197.1L831.8 258.1" stroke="#b9cbd0" stroke-width="1.0" fill="none" opacity="0.8"/><path d="M586.4 196.6L612.3 200.6L827.9 259.8" stroke="#b9cbd0" stroke-width="1.0" fill="none" opacity="0.8"/><path d="M578.5 199.8L609.1 204.0L824.1 261.3" stroke="#b9cbd0" stroke-width="1.0" fill="none" opacity="0.8"/><path d="M572.8 202.0L606.7 206.4L821.4 262.4" stroke="#b9cbd0" stroke-width="1.0" fill="none" opacity="0.8"/><path d="M567.1 204.3L604.4 208.8L818.7 263.6" stroke="#b9cbd0" stroke-width="1.0" fill="none" opacity="0.8"/><path d="M561.3 206.5L602.0 211.2L816.0 264.7" stroke="#b9cbd0" stroke-width="1.0" fill="none" opacity="0.8"/><path d="M555.6 208.8L599.7 213.6L813.3 265.8" stroke="#b9cbd0" stroke-width="1.0" fill="none" opacity="0.8"/><path d="M549.9 211.1L597.4 216.0L810.6 266.9" stroke="#b9cbd0" stroke-width="1.0" fill="none" opacity="0.8"/><path d="M543.9 213.4L594.9 218.6L807.7 268.1" stroke="#b9cbd0" stroke-width="1.0" fill="none" opacity="0.8"/><path d="M537.6 215.9L592.3 221.3L804.7 269.4" stroke="#b9cbd0" stroke-width="1.0" fill="none" opacity="0.8"/><path d="M591.5 194.6L614.4 198.5L830.3 258.8" stroke="#2f3a3f" stroke-width="0.6" fill="none" opacity="0.9"/><path d="M581.3 198.6L610.2 202.8L825.5 260.8" stroke="#2f3a3f" stroke-width="0.8" fill="none" opacity="0.9"/><path d="M575.6 200.9L607.9 205.2L736.8 239.2" stroke="#2f3a3f" stroke-width="0.6" fill="none" opacity="0.9"/><path d="M569.9 203.1L605.6 207.6L777.2 251.9" stroke="#2f3a3f" stroke-width="0.6" fill="none" opacity="0.9"/><path d="M564.2 205.4L603.2 210.0L817.3 264.1" stroke="#2f3a3f" stroke-width="0.8" fill="none" opacity="0.9"/><path d="M558.5 207.7L600.9 212.4L729.1 244.1" stroke="#2f3a3f" stroke-width="0.6" fill="none" opacity="0.9"/><path d="M552.8 209.9L598.5 214.8L769.3 256.1" stroke="#2f3a3f" stroke-width="0.6" fill="none" opacity="0.9"/><path d="M547.1 212.2L596.2 217.2L809.2 267.5" stroke="#2f3a3f" stroke-width="0.8" fill="none" opacity="0.9"/><path d="M540.7 214.7L593.6 219.9L806.2 268.8" stroke="#2f3a3f" stroke-width="0.6" fill="none" opacity="0.9"/><path d="M619.8 207.3L626.3 209.0" stroke="#2f3a3f" stroke-width="0.35" opacity="0.55"/><path d="M630.6 210.2L637.0 211.9" stroke="#2f3a3f" stroke-width="0.35" opacity="0.55"/><path d="M652.1 215.9L658.5 217.6" stroke="#2f3a3f" stroke-width="0.35" opacity="0.55"/><path d="M662.8 218.8L669.3 220.5" stroke="#2f3a3f" stroke-width="0.35" opacity="0.55"/><path d="M684.3 224.5L690.8 226.2" stroke="#2f3a3f" stroke-width="0.35" opacity="0.55"/><path d="M695.1 227.4L701.5 229.1" stroke="#2f3a3f" stroke-width="0.35" opacity="0.55"/><path d="M716.6 233.1L723.0 234.8" stroke="#2f3a3f" stroke-width="0.35" opacity="0.55"/><path d="M727.3 236.0L733.8 237.7" stroke="#2f3a3f" stroke-width="0.35" opacity="0.55"/><path d="M748.9 241.7L755.3 243.4" stroke="#2f3a3f" stroke-width="0.35" opacity="0.55"/><path d="M759.6 244.6L766.1 246.3" stroke="#2f3a3f" stroke-width="0.35" opacity="0.55"/><path d="M781.1 250.3L787.6 252.0" stroke="#2f3a3f" stroke-width="0.35" opacity="0.55"/><path d="M791.9 253.2L798.3 254.9" stroke="#2f3a3f" stroke-width="0.35" opacity="0.55"/><path d="M617.5 209.6L623.9 211.3" stroke="#2f3a3f" stroke-width="0.35" opacity="0.55"/><path d="M638.9 215.2L645.4 216.9" stroke="#2f3a3f" stroke-width="0.35" opacity="0.55"/><path d="M649.7 218.0L656.1 219.7" stroke="#2f3a3f" stroke-width="0.35" opacity="0.55"/><path d="M671.1 223.7L677.6 225.3" stroke="#2f3a3f" stroke-width="0.35" opacity="0.55"/><path d="M681.9 226.5L688.3 228.1" stroke="#2f3a3f" stroke-width="0.35" opacity="0.55"/><path d="M703.3 232.1L709.8 233.7" stroke="#2f3a3f" stroke-width="0.35" opacity="0.55"/><path d="M714.1 234.9L720.5 236.5" stroke="#2f3a3f" stroke-width="0.35" opacity="0.55"/><path d="M735.5 240.5L742.0 242.1" stroke="#2f3a3f" stroke-width="0.35" opacity="0.55"/><path d="M746.3 243.3L752.7 245.0" stroke="#2f3a3f" stroke-width="0.35" opacity="0.55"/><path d="M767.7 248.9L774.2 250.6" stroke="#2f3a3f" stroke-width="0.35" opacity="0.55"/><path d="M778.5 251.7L784.9 253.4" stroke="#2f3a3f" stroke-width="0.35" opacity="0.55"/><path d="M799.9 257.3L806.4 259.0" stroke="#2f3a3f" stroke-width="0.35" opacity="0.55"/><path d="M625.8 214.7L632.3 216.4" stroke="#2f3a3f" stroke-width="0.35" opacity="0.55"/><path d="M636.5 217.5L643.0 219.1" stroke="#2f3a3f" stroke-width="0.35" opacity="0.55"/><path d="M658.0 222.9L664.4 224.6" stroke="#2f3a3f" stroke-width="0.35" opacity="0.55"/><path d="M668.7 225.7L675.1 227.3" stroke="#2f3a3f" stroke-width="0.35" opacity="0.55"/><path d="M690.1 231.2L696.5 232.8" stroke="#2f3a3f" stroke-width="0.35" opacity="0.55"/><path d="M700.8 233.9L707.3 235.5" stroke="#2f3a3f" stroke-width="0.35" opacity="0.55"/><path d="M722.3 239.4L728.7 241.0" stroke="#2f3a3f" stroke-width="0.35" opacity="0.55"/><path d="M733.0 242.1L739.4 243.7" stroke="#2f3a3f" stroke-width="0.35" opacity="0.55"/><path d="M754.4 247.6L760.8 249.2" stroke="#2f3a3f" stroke-width="0.35" opacity="0.55"/><path d="M765.1 250.3L771.6 252.0" stroke="#2f3a3f" stroke-width="0.35" opacity="0.55"/><path d="M786.6 255.8L793.0 257.4" stroke="#2f3a3f" stroke-width="0.35" opacity="0.55"/><path d="M797.3 258.5L803.7 260.2" stroke="#2f3a3f" stroke-width="0.35" opacity="0.55"/><path d="M612.7 214.3L619.2 215.9" stroke="#2f3a3f" stroke-width="0.35" opacity="0.55"/><path d="M623.4 217.0L629.9 218.6" stroke="#2f3a3f" stroke-width="0.35" opacity="0.55"/><path d="M644.8 222.4L651.3 224.0" stroke="#2f3a3f" stroke-width="0.35" opacity="0.55"/><path d="M655.5 225.0L662.0 226.6" stroke="#2f3a3f" stroke-width="0.35" opacity="0.55"/><path d="M676.9 230.4L683.3 232.0" stroke="#2f3a3f" stroke-width="0.35" opacity="0.55"/><path d="M687.6 233.1L694.0 234.7" stroke="#2f3a3f" stroke-width="0.35" opacity="0.55"/><path d="M709.0 238.4L715.4 240.0" stroke="#2f3a3f" stroke-width="0.35" opacity="0.55"/><path d="M719.7 241.1L726.1 242.7" stroke="#2f3a3f" stroke-width="0.35" opacity="0.55"/><path d="M741.1 246.4L747.5 248.0" stroke="#2f3a3f" stroke-width="0.35" opacity="0.55"/><path d="M751.8 249.1L758.2 250.7" stroke="#2f3a3f" stroke-width="0.35" opacity="0.55"/><path d="M773.2 254.4L779.6 256.0" stroke="#2f3a3f" stroke-width="0.35" opacity="0.55"/><path d="M783.9 257.1L790.3 258.7" stroke="#2f3a3f" stroke-width="0.35" opacity="0.55"/><path d="M610.4 216.7L616.8 218.2" stroke="#2f3a3f" stroke-width="0.35" opacity="0.55"/><path d="M631.7 221.9L638.2 223.5" stroke="#2f3a3f" stroke-width="0.35" opacity="0.55"/><path d="M642.4 224.5L648.8 226.1" stroke="#2f3a3f" stroke-width="0.35" opacity="0.55"/><path d="M663.8 229.7L670.2 231.3" stroke="#2f3a3f" stroke-width="0.35" opacity="0.55"/><path d="M674.5 232.3L680.9 233.9" stroke="#2f3a3f" stroke-width="0.35" opacity="0.55"/><path d="M695.8 237.6L702.2 239.1" stroke="#2f3a3f" stroke-width="0.35" opacity="0.55"/><path d="M706.5 240.2L712.9 241.7" stroke="#2f3a3f" stroke-width="0.35" opacity="0.55"/><path d="M727.9 245.4L734.3 247.0" stroke="#2f3a3f" stroke-width="0.35" opacity="0.55"/><path d="M738.5 248.0L744.9 249.6" stroke="#2f3a3f" stroke-width="0.35" opacity="0.55"/><path d="M759.9 253.2L766.3 254.8" stroke="#2f3a3f" stroke-width="0.35" opacity="0.55"/><path d="M770.6 255.8L777.0 257.4" stroke="#2f3a3f" stroke-width="0.35" opacity="0.55"/><path d="M791.9 261.0L798.3 262.6" stroke="#2f3a3f" stroke-width="0.35" opacity="0.55"/><path d="M618.7 221.6L625.1 223.1" stroke="#2f3a3f" stroke-width="0.35" opacity="0.55"/><path d="M629.4 224.1L635.7 225.6" stroke="#2f3a3f" stroke-width="0.35" opacity="0.55"/><path d="M650.7 229.2L657.1 230.7" stroke="#2f3a3f" stroke-width="0.35" opacity="0.55"/><path d="M661.3 231.8L667.7 233.3" stroke="#2f3a3f" stroke-width="0.35" opacity="0.55"/><path d="M682.7 236.8L689.0 238.4" stroke="#2f3a3f" stroke-width="0.35" opacity="0.55"/><path d="M693.3 239.4L699.7 240.9" stroke="#2f3a3f" stroke-width="0.35" opacity="0.55"/><path d="M714.6 244.5L721.0 246.0" stroke="#2f3a3f" stroke-width="0.35" opacity="0.55"/><path d="M725.3 247.0L731.7 248.6" stroke="#2f3a3f" stroke-width="0.35" opacity="0.55"/><path d="M746.6 252.1L753.0 253.6" stroke="#2f3a3f" stroke-width="0.35" opacity="0.55"/><path d="M757.3 254.7L763.7 256.2" stroke="#2f3a3f" stroke-width="0.35" opacity="0.55"/><path d="M778.6 259.8L785.0 261.3" stroke="#2f3a3f" stroke-width="0.35" opacity="0.55"/><path d="M789.3 262.3L795.7 263.8" stroke="#2f3a3f" stroke-width="0.35" opacity="0.55"/><path d="M605.5 221.5L611.9 223.0" stroke="#2f3a3f" stroke-width="0.35" opacity="0.55"/><path d="M616.2 224.0L622.6 225.5" stroke="#2f3a3f" stroke-width="0.35" opacity="0.55"/><path d="M637.5 228.9L643.8 230.4" stroke="#2f3a3f" stroke-width="0.35" opacity="0.55"/><path d="M648.1 231.4L654.5 232.9" stroke="#2f3a3f" stroke-width="0.35" opacity="0.55"/><path d="M669.4 236.4L675.8 237.9" stroke="#2f3a3f" stroke-width="0.35" opacity="0.55"/><path d="M680.0 238.8L686.4 240.3" stroke="#2f3a3f" stroke-width="0.35" opacity="0.55"/><path d="M701.3 243.8L707.7 245.3" stroke="#2f3a3f" stroke-width="0.35" opacity="0.55"/><path d="M711.9 246.3L718.3 247.8" stroke="#2f3a3f" stroke-width="0.35" opacity="0.55"/><path d="M733.2 251.2L739.6 252.7" stroke="#2f3a3f" stroke-width="0.35" opacity="0.55"/><path d="M743.9 253.7L750.3 255.2" stroke="#2f3a3f" stroke-width="0.35" opacity="0.55"/><path d="M765.2 258.7L771.5 260.2" stroke="#2f3a3f" stroke-width="0.35" opacity="0.55"/><path d="M775.8 261.1L782.2 262.6" stroke="#2f3a3f" stroke-width="0.35" opacity="0.55"/><path d="M617.0 195.8Q606.5 208.0 591.0 222.6L592.2 229.9" stroke="#2f3a3f" stroke-width="0.9" fill="none"/><path d="M643.0 203.2Q626.4 213.2 604.8 225.7L603.3 232.0" stroke="#2f3a3f" stroke-width="0.8" fill="none"/><path d="M658.1 207.5Q641.4 217.1 619.6 229.0L618.1 234.9" stroke="#2f3a3f" stroke-width="0.8" fill="none"/><path d="M673.2 211.8Q656.4 220.9 634.5 232.3L632.8 237.7" stroke="#2f3a3f" stroke-width="0.8" fill="none"/><path d="M688.4 216.2Q671.4 224.7 649.4 235.6L647.5 240.6" stroke="#2f3a3f" stroke-width="0.8" fill="none"/><path d="M703.5 220.5Q686.4 228.5 664.2 239.0L662.2 243.4" stroke="#2f3a3f" stroke-width="0.8" fill="none"/><path d="M718.7 224.8Q701.4 232.3 679.1 242.3L676.9 246.2" stroke="#2f3a3f" stroke-width="0.8" fill="none"/><path d="M734.9 229.4Q717.4 236.4 695.0 245.8L692.7 249.3" stroke="#2f3a3f" stroke-width="0.8" fill="none"/><path d="M751.1 234.1Q733.5 240.5 710.9 249.4L708.4 252.3" stroke="#2f3a3f" stroke-width="0.8" fill="none"/><path d="M767.3 238.7Q749.6 244.6 726.8 252.9L724.2 255.3" stroke="#2f3a3f" stroke-width="0.8" fill="none"/><path d="M783.6 243.3Q765.6 248.7 742.7 256.5L740.0 258.4" stroke="#2f3a3f" stroke-width="0.8" fill="none"/><path d="M799.8 247.9Q781.7 252.8 758.6 260.0L755.7 261.4" stroke="#2f3a3f" stroke-width="0.8" fill="none"/><path d="M816.0 252.6Q797.8 256.9 774.6 263.6L771.5 264.4" stroke="#2f3a3f" stroke-width="0.8" fill="none"/><path d="M831.1 256.9Q812.8 260.7 789.4 266.9L786.2 267.3" stroke="#2f3a3f" stroke-width="0.8" fill="none"/><path d="M603.6 193.2L551.4 218.8" stroke="#2f3a3f" stroke-width="0.7" fill="none"/><path d="M609.7 194.4L569.5 220.5" stroke="#2f3a3f" stroke-width="0.7" fill="none"/><path d="M547 210.4L583.6 220.4L545 217.6L538.6 215.4Z" fill="#aec1c6" stroke="#2f3a3f" stroke-width="0.45"/><path d="M534.4 217.3L591 222.3L592.2 229.9L586.7 228.9L531 228.9L527.4 227.6L527 224.5L528.2 220.6L530 218.2Z" fill="#b3c5ca" stroke="#2f3a3f" stroke-width="0.6" stroke-linejoin="round"/><path d="M531.4 228.8Q531.8 220.1 533.2 218.4" fill="none" stroke="#2f3a3f" stroke-width="0.5"/><path d="M533.6 228.8Q534.0 220.3 535.6 218.4" fill="none" stroke="#2f3a3f" stroke-width="0.5"/><path d="M536.4 228.8Q536.8 220.6 538.6 218.4" fill="none" stroke="#2f3a3f" stroke-width="0.5"/><path d="M544.6 228.8Q545.1 221.3 547.2 218.4" fill="none" stroke="#2f3a3f" stroke-width="0.5"/><path d="M556.4 228.8Q556.9 222.4 559.0 219.4" fill="none" stroke="#2f3a3f" stroke-width="0.5"/><path d="M567.0 228.8Q567.5 223.3 569.4 220.3" fill="none" stroke="#2f3a3f" stroke-width="0.5"/><path d="M574.6 228.8Q575.0 223.9 576.8 220.9" fill="none" stroke="#2f3a3f" stroke-width="0.5"/><path d="M583.0 228.8Q583.3 224.6 584.6 221.6" fill="none" stroke="#2f3a3f" stroke-width="0.5"/><path d="M529 221.6L590.6 225.2" stroke="#2f3a3f" stroke-width="0.35" opacity="0.6" fill="none"/><path d="M554.6 205.8L555.2 202.4L557.8 201.1L561.4 201.9L561.8 204L557 206.6Z" fill="#5ab47c" stroke="#2f6a48" stroke-width="0.45"/><path d="M724 226.4L733.4 228.2L744.6 228.4L744.8 230.2L736 231.4Z" fill="#b4c6cb" stroke="#2f3a3f" stroke-width="0.45"/><path d="M802.2 270.4L806.4 266L815.6 261.8L825.6 259.4L824 263.6L813.6 268L804 270.8Z" fill="#1e8be8" stroke="#0d4f9a" stroke-width="0.45"/><ellipse cx="817.6" cy="263.5" rx="2.3" ry="1.1" fill="#d6dce0" transform="rotate(-22 817.6 263.5)"/><path d="M809.6 265.2L808.8 269.4M812.6 263.6L812 268.4" stroke="#0d3f7a" stroke-width="0.7"/><path d="M825.4 259.2L833.4 257.7L828.2 261.8Z" fill="#e8842a" stroke="#7a4210" stroke-width="0.35"/><circle cx="813.4" cy="269.8" r="0.8" fill="#a8a890"/></svg>
<div class="b" style="left:870.40px;top:39.40px;width:26.20px;height:466.60px;background:#f0f0f0;"></div>
<svg class="b" style="left:879.40px;top:49.90px;" width="7.80" height="7.80" viewBox="0 0 9 9"><g fill="none" stroke="#606060" stroke-width="0.55" stroke-linejoin="round" stroke-linecap="round"><circle cx="4.5" cy="4.5" r="3.6"/><path d="M4.5 4V6.4M4.5 2.6V2.9"/></g></svg>
<div class="t" style="left:833.20px;width:100px;text-align:center;top:59px;font-size:4.75px;line-height:5px;color:#606060;">Information</div>
<svg class="b" style="left:879.40px;top:72.90px;" width="7.80" height="7.80" viewBox="0 0 9 9"><g fill="none" stroke="#606060" stroke-width="0.55" stroke-linejoin="round" stroke-linecap="round"><path d="M5.2 1.6H1.6V7.8H6.8V5"/><path d="M3.6 5.2V3.4H6.6M5.6 2.2L6.8 3.4L5.6 4.6" /></g></svg>
<div class="t" style="left:833.20px;width:100px;text-align:center;top:81px;font-size:4.75px;line-height:5px;color:#606060;">Open</div>
<svg class="b" style="left:872.40px;top:75.60px;" width="1.60" height="2.40" viewBox="0 0 1.6 2.4"><path d="M1.4 0.2L0.3 1.2L1.4 2.2" fill="none" stroke="#b4b4b4" stroke-width="0.4"/></svg>
<svg class="b" style="left:879.40px;top:94.50px;" width="7.80" height="7.80" viewBox="0 0 9 9"><g fill="none" stroke="#b4b4b4" stroke-width="0.55" stroke-linejoin="round" stroke-linecap="round"><path d="M2 1L6 6M7 1L3 6"/><circle cx="2.6" cy="7" r="1"/><circle cx="6.4" cy="7" r="1"/></g></svg>
<div class="t" style="left:833.20px;width:100px;text-align:center;top:103px;font-size:4.75px;line-height:5px;color:#b4b4b4;">Cut</div>
<svg class="b" style="left:879.40px;top:116.50px;" width="7.80" height="7.80" viewBox="0 0 9 9"><g fill="none" stroke="#606060" stroke-width="0.55" stroke-linejoin="round" stroke-linecap="round"><path d="M1.6 0.8H4.6L5.8 2V6.2H1.6Z"/><path d="M3.4 6.2V8.2H7.6V4L6.4 2.8H5.8"/></g></svg>
<div class="t" style="left:833.20px;width:100px;text-align:center;top:126px;font-size:4.75px;line-height:5px;color:#606060;">Copy</div>
<svg class="b" style="left:879.40px;top:138.70px;" width="7.80" height="7.80" viewBox="0 0 9 9"><g fill="none" stroke="#b4b4b4" stroke-width="0.55" stroke-linejoin="round" stroke-linecap="round"><path d="M1.6 1.6H5.8V7.8H1.6Z"/><path d="M3 1.6V0.8H4.4V1.6"/><path d="M4 4H7.4V8.2H4Z"/></g></svg>
<div class="t" style="left:833.20px;width:100px;text-align:center;top:148px;font-size:4.75px;line-height:5px;color:#b4b4b4;">Paste</div>
<svg class="b" style="left:879.40px;top:160.30px;" width="7.80" height="7.80" viewBox="0 0 9 9"><g fill="none" stroke="#606060" stroke-width="0.55" stroke-linejoin="round" stroke-linecap="round"><path d="M4.5 0.8V3M4.5 6V8.2M0.8 4.5H3M6 4.5H8.2M1.9 1.9L3.4 3.4M5.6 5.6L7.1 7.1M7.1 1.9L5.6 3.4M3.4 5.6L1.9 7.1"/></g></svg>
<div class="t" style="left:833.20px;width:100px;text-align:center;top:169px;font-size:4.75px;line-height:5px;color:#606060;">New</div>
<svg class="b" style="left:872.40px;top:163.00px;" width="1.60" height="2.40" viewBox="0 0 1.6 2.4"><path d="M1.4 0.2L0.3 1.2L1.4 2.2" fill="none" stroke="#b4b4b4" stroke-width="0.4"/></svg>
<svg class="b" style="left:879.40px;top:182.30px;" width="7.80" height="7.80" viewBox="0 0 9 9"><g fill="none" stroke="#606060" stroke-width="0.55" stroke-linejoin="round" stroke-linecap="round"><path d="M1 8L1.5 6.1L6 1.4L7.4 2.8L2.9 7.5Z"/></g></svg>
<div class="t" style="left:833.20px;width:100px;text-align:center;top:192px;font-size:4.75px;line-height:5px;color:#606060;">Edit</div>
<svg class="b" style="left:872.40px;top:185.00px;" width="1.60" height="2.40" viewBox="0 0 1.6 2.4"><path d="M1.4 0.2L0.3 1.2L1.4 2.2" fill="none" stroke="#b4b4b4" stroke-width="0.4"/></svg>
<svg class="b" style="left:879.40px;top:204.30px;" width="7.80" height="7.80" viewBox="0 0 9 9"><g fill="none" stroke="#606060" stroke-width="0.55" stroke-linejoin="round" stroke-linecap="round"><path d="M1 7.6L5 3.6M6.6 1A1.8 1.8 0 1 0 7.8 3.2L6.6 3.4L6 2.4Z"/><path d="M1.2 1.2L3 3M5.4 5.4L7.8 7.8L7.2 8.2L5 6"/></g></svg>
<div class="t" style="left:833.20px;width:100px;text-align:center;top:214px;font-size:4.75px;line-height:5px;color:#606060;">Manage</div>
<svg class="b" style="left:872.40px;top:207.00px;" width="1.60" height="2.40" viewBox="0 0 1.6 2.4"><path d="M1.4 0.2L0.3 1.2L1.4 2.2" fill="none" stroke="#b4b4b4" stroke-width="0.4"/></svg>
<svg class="b" style="left:879.40px;top:226.50px;" width="7.80" height="7.80" viewBox="0 0 9 9"><g fill="none" stroke="#606060" stroke-width="0.55" stroke-linejoin="round" stroke-linecap="round"><circle cx="6.4" cy="1.8" r="1"/><circle cx="2.2" cy="4.5" r="1"/><circle cx="6.4" cy="7.2" r="1"/><path d="M3.1 4L5.5 2.3M3.1 5L5.5 6.7"/></g></svg>
<div class="t" style="left:833.20px;width:100px;text-align:center;top:236px;font-size:4.75px;line-height:5px;color:#606060;">Share</div>
<svg class="b" style="left:872.40px;top:229.20px;" width="1.60" height="2.40" viewBox="0 0 1.6 2.4"><path d="M1.4 0.2L0.3 1.2L1.4 2.2" fill="none" stroke="#b4b4b4" stroke-width="0.4"/></svg>
<svg class="b" style="left:879.40px;top:248.70px;" width="7.80" height="7.80" viewBox="0 0 9 9"><g fill="none" stroke="#606060" stroke-width="0.55" stroke-linejoin="round" stroke-linecap="round"><path d="M0.6 4.5C2 2.2 7 2.2 8.4 4.5C7 6.8 2 6.8 0.6 4.5Z"/><circle cx="4.5" cy="4.5" r="1.2"/></g></svg>
<div class="t" style="left:833.20px;width:100px;text-align:center;top:258px;font-size:4.75px;line-height:5px;color:#606060;">View</div>
<svg class="b" style="left:872.40px;top:251.40px;" width="1.60" height="2.40" viewBox="0 0 1.6 2.4"><path d="M1.4 0.2L0.3 1.2L1.4 2.2" fill="none" stroke="#b4b4b4" stroke-width="0.4"/></svg>
</body></html>
